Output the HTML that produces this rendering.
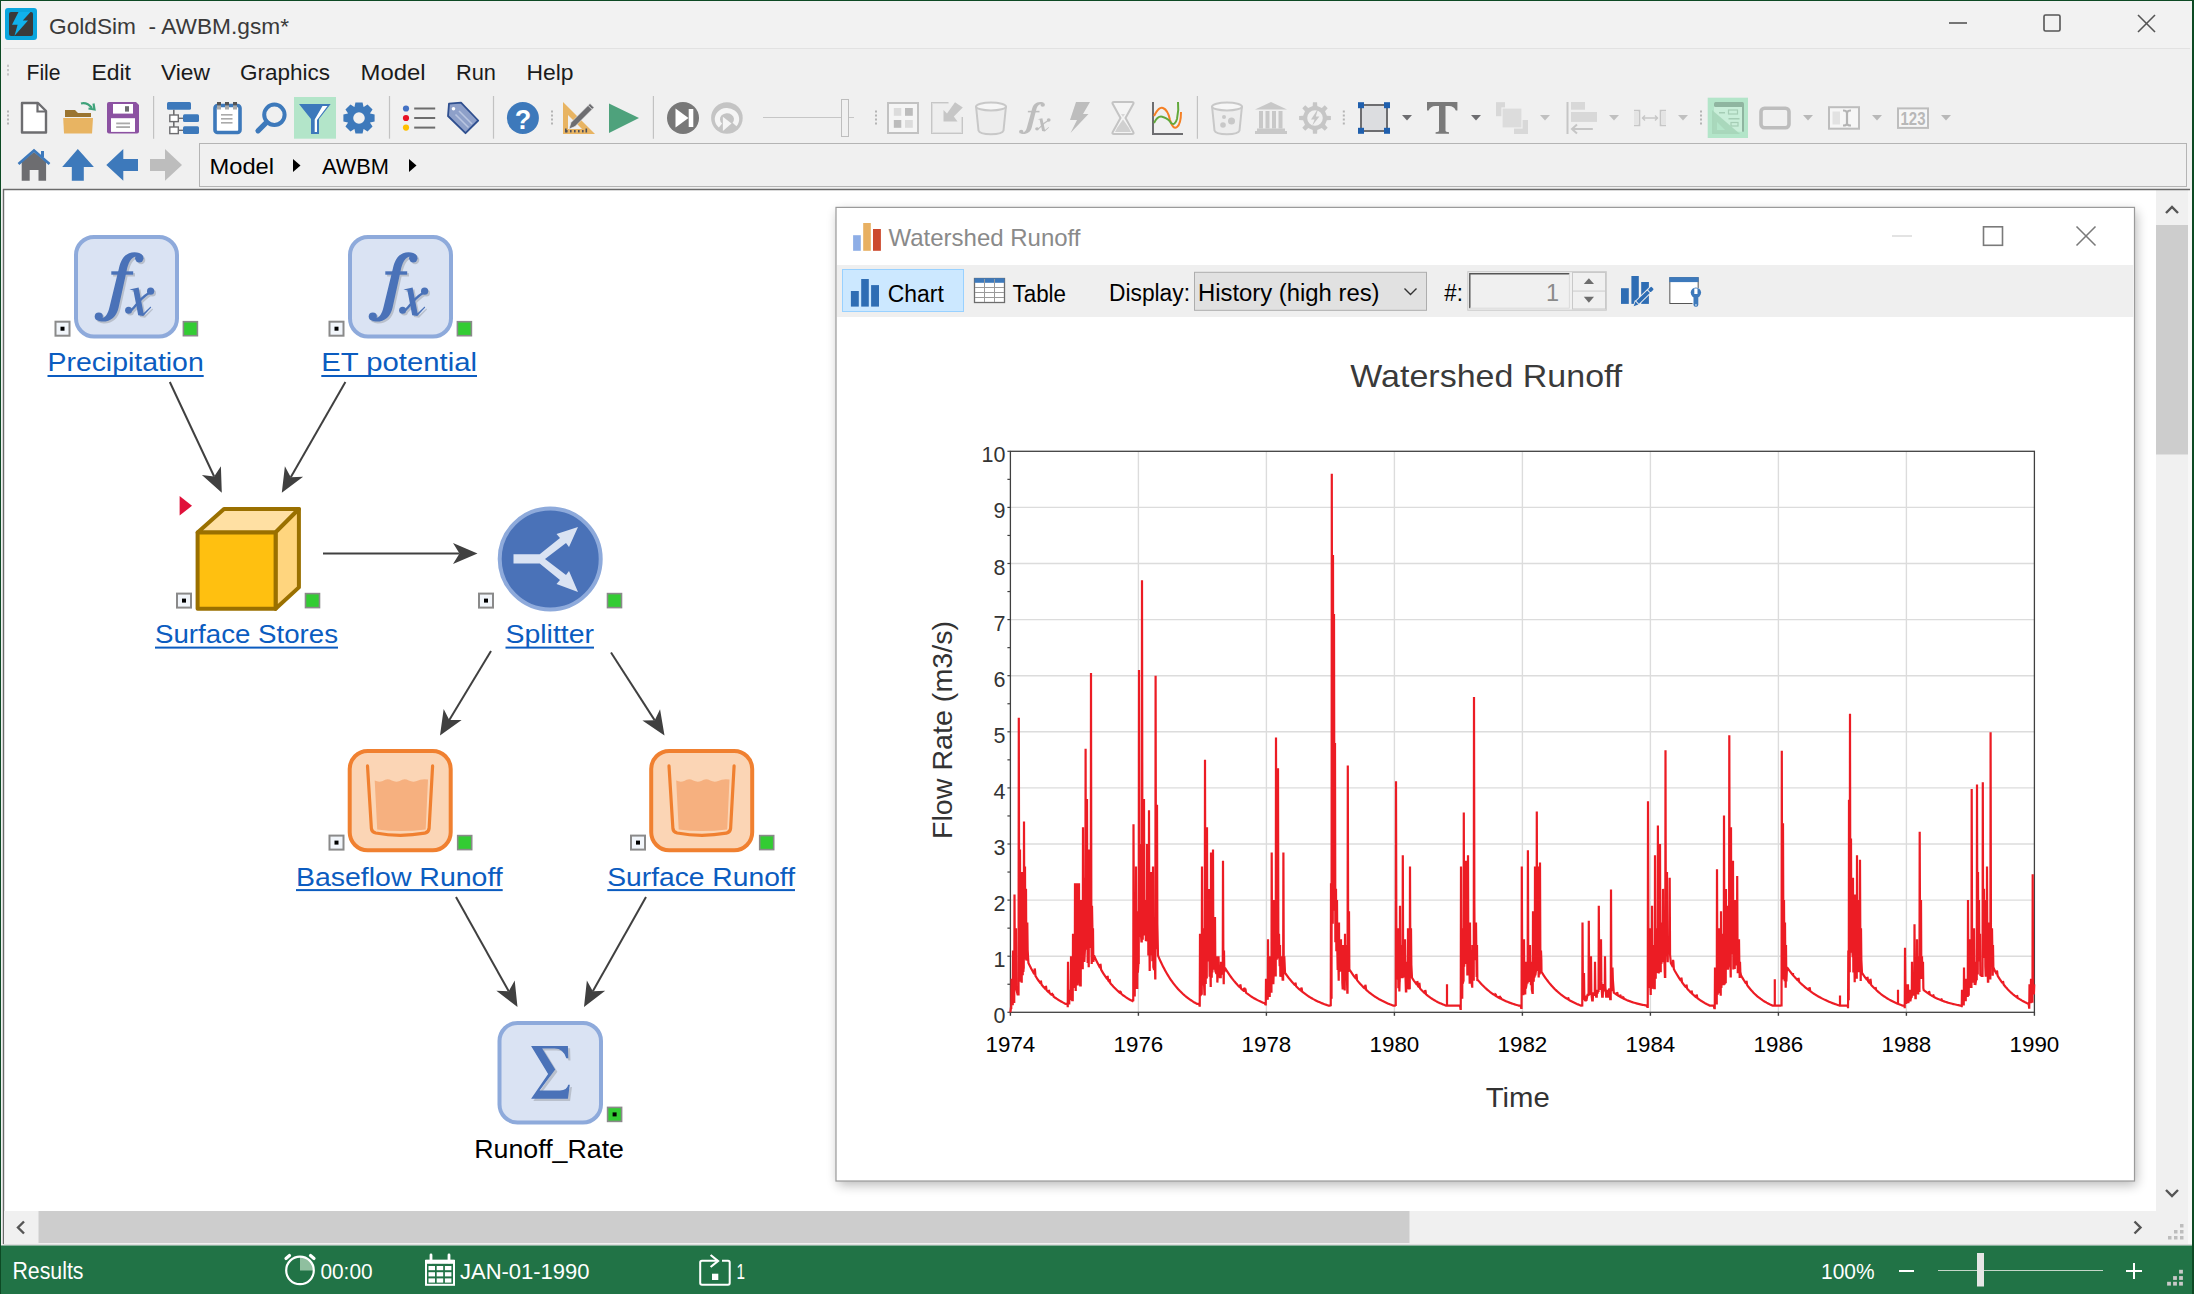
<!DOCTYPE html>
<html><head><meta charset="utf-8"><title>GoldSim - AWBM</title>
<style>html,body{margin:0;padding:0;overflow:hidden;background:#f0f0f0}svg{display:block}</style>
</head><body>
<svg width="2194" height="1294" viewBox="0 0 2194 1294" font-family="Liberation Sans, sans-serif">
<defs>
<filter id="shadow" x="-5%" y="-5%" width="110%" height="110%"><feGaussianBlur stdDeviation="6"/></filter>
</defs>
<rect x="0" y="0" width="2194" height="1294" rx="0" fill="#f0f0f0" />
<rect x="0" y="0" width="2194" height="48" rx="0" fill="#f2f2f2" />
<line x1="4" y1="48.5" x2="2190" y2="48.5" stroke="#e2e2e2" stroke-width="1" />
<rect x="0" y="0" width="2194" height="1" rx="0" fill="#0d4a24" />
<rect x="0" y="0" width="1" height="1294" rx="0" fill="#0d4a24" />
<rect x="2188" y="190" width="4" height="1055" rx="0" fill="#f7f7f7" />
<rect x="2192" y="0" width="2" height="1294" rx="0" fill="#0d4a24" />
<rect x="5" y="8" width="32" height="32" rx="3" fill="#0aa6de" />
<rect x="9" y="12" width="24" height="24" rx="2" fill="#3a3a3a" />
<path d="M18.5,12 L30.5,12 L22.8,20.4 L28,20.4 L14.5,35.8 L17.6,24.8 L12,24.8 Z" fill="#10b2ec" />
<text x="49" y="33.8" font-family="Liberation Sans" font-size="21.8" fill="#3a3a3a" text-anchor="start" font-weight="normal" xml:space="preserve" textLength="240" lengthAdjust="spacingAndGlyphs" >GoldSim  - AWBM.gsm*</text>
<line x1="1949" y1="23" x2="1967" y2="23" stroke="#555" stroke-width="1.6" />
<rect x="2044" y="15" width="16" height="16" rx="1.5" fill="none" stroke="#555" stroke-width="1.6" />
<line x1="2138" y1="15" x2="2155" y2="32" stroke="#555" stroke-width="1.6" />
<line x1="2155" y1="15" x2="2138" y2="32" stroke="#555" stroke-width="1.6" />
<rect x="7" y="64.7" width="2" height="2.2" rx="0" fill="#c4c4c4" />
<rect x="7" y="69.0" width="2" height="2.2" rx="0" fill="#c4c4c4" />
<rect x="7" y="73.3" width="2" height="2.2" rx="0" fill="#c4c4c4" />
<text x="26.5" y="80" font-family="Liberation Sans" font-size="22" fill="#1b1b1b" text-anchor="start" font-weight="normal" xml:space="preserve" textLength="34" lengthAdjust="spacingAndGlyphs" >File</text>
<text x="91.5" y="80" font-family="Liberation Sans" font-size="22" fill="#1b1b1b" text-anchor="start" font-weight="normal" xml:space="preserve" textLength="39.5" lengthAdjust="spacingAndGlyphs" >Edit</text>
<text x="161" y="80" font-family="Liberation Sans" font-size="22" fill="#1b1b1b" text-anchor="start" font-weight="normal" xml:space="preserve" textLength="49" lengthAdjust="spacingAndGlyphs" >View</text>
<text x="240" y="80" font-family="Liberation Sans" font-size="22" fill="#1b1b1b" text-anchor="start" font-weight="normal" xml:space="preserve" textLength="90" lengthAdjust="spacingAndGlyphs" >Graphics</text>
<text x="360.5" y="80" font-family="Liberation Sans" font-size="22" fill="#1b1b1b" text-anchor="start" font-weight="normal" xml:space="preserve" textLength="65" lengthAdjust="spacingAndGlyphs" >Model</text>
<text x="456" y="80" font-family="Liberation Sans" font-size="22" fill="#1b1b1b" text-anchor="start" font-weight="normal" xml:space="preserve" textLength="40" lengthAdjust="spacingAndGlyphs" >Run</text>
<text x="526.5" y="80" font-family="Liberation Sans" font-size="22" fill="#1b1b1b" text-anchor="start" font-weight="normal" xml:space="preserve" textLength="47" lengthAdjust="spacingAndGlyphs" >Help</text>
<rect x="7" y="110.5" width="2" height="2" rx="0" fill="#b4b4b4" />
<rect x="7" y="114.5" width="2" height="2" rx="0" fill="#b4b4b4" />
<rect x="7" y="118.5" width="2" height="2" rx="0" fill="#b4b4b4" />
<rect x="7" y="122.5" width="2" height="2" rx="0" fill="#b4b4b4" />
<path d="M22,103 L38,103 L46,111 L46,132.5 L22,132.5 Z" fill="#fff" stroke="#6d6d70" stroke-width="2.4" stroke-linejoin="round"/>
<path d="M37.5,103 L37.5,111.5 L46,111.5" fill="none" stroke="#6d6d70" stroke-width="2.2" />
<path d="M65,110 L75,110 L78,113 L91,113 L91,117 L65,117 Z" fill="#9a7430" />
<path d="M63.2,118 L93,118 L92,133.5 L64,133.5 Z" fill="#e8b462" />
<path d="M81,103.5 Q87,102 92,108" fill="none" stroke="#3ea27a" stroke-width="2.2" />
<path d="M88.5,108.5 L94.5,109.5 L93.5,103.5" fill="none" stroke="#3ea27a" stroke-width="2.2" />
<path d="M107,104 Q107,102 109,102 L136,102 L139,105 L139,131.5 Q139,133.6 137,133.6 L109,133.6 Q107,133.6 107,131.5 Z" fill="#8c52a2" />
<rect x="113" y="104" width="20" height="9.6" rx="0" fill="#fff" />
<rect x="125" y="106.2" width="4" height="5.4" rx="0" fill="#6d6d70" />
<rect x="111" y="118.2" width="24" height="13.7" rx="0" fill="#fff" />
<rect x="116.2" y="122.5" width="13.8" height="1.8" rx="0" fill="#aaa" />
<rect x="116.2" y="126.2" width="13.8" height="1.8" rx="0" fill="#aaa" />
<line x1="153.6" y1="96" x2="153.6" y2="138.7" stroke="#c2c2c2" stroke-width="1.2" />
<rect x="167" y="102" width="24" height="7.7" rx="1.5" fill="#3d79bb" />
<line x1="173.8" y1="109.7" x2="173.8" y2="130" stroke="#6d6d70" stroke-width="1.6" />
<rect x="169.8" y="115" width="8.5" height="6.6" rx="0" fill="#fff" stroke="#6d6d70" stroke-width="1.4" />
<rect x="169.8" y="127" width="8.5" height="6.6" rx="0" fill="#fff" stroke="#6d6d70" stroke-width="1.4" />
<line x1="178.3" y1="118.3" x2="183" y2="118.3" stroke="#6d6d70" stroke-width="1.4" />
<line x1="178.3" y1="130.3" x2="183" y2="130.3" stroke="#6d6d70" stroke-width="1.4" />
<rect x="183" y="114.2" width="16" height="7.7" rx="1.5" fill="#3d79bb" />
<rect x="183" y="126.2" width="16" height="7.7" rx="1.5" fill="#3d79bb" />
<rect x="215" y="105.5" width="25" height="27" rx="2.5" fill="#fff" stroke="#3d79bb" stroke-width="3.6" />
<rect x="217" y="102" width="4" height="3.5" rx="0" fill="#555" />
<rect x="217" y="105.5" width="4" height="4" rx="0" fill="#aaa" />
<rect x="225" y="102" width="4" height="3.5" rx="0" fill="#555" />
<rect x="225" y="105.5" width="4" height="4" rx="0" fill="#aaa" />
<rect x="233" y="102" width="4" height="3.5" rx="0" fill="#555" />
<rect x="233" y="105.5" width="4" height="4" rx="0" fill="#aaa" />
<rect x="221" y="114.0" width="11.5" height="1.6" rx="0" fill="#aaa" />
<rect x="221" y="118.0" width="11.5" height="1.6" rx="0" fill="#aaa" />
<rect x="221" y="122.0" width="11.5" height="1.6" rx="0" fill="#aaa" />
<circle cx="274.4" cy="114.8" r="10.2" fill="none" stroke="#3d79bb" stroke-width="4" />
<line x1="258" y1="130.8" x2="266.5" y2="122.3" stroke="#3d79bb" stroke-width="5.2" stroke-linecap="round"/>
<rect x="294" y="97" width="42" height="41.7" rx="0" fill="#b3e5c9" />
<path d="M299,104 L330.7,104 L319,119 L319,134 L311,134 L311,119 Z" fill="#3d79bb" />
<path d="M322.5,106 L327.5,106 L317,120 L317,132 L314.7,132 L314.7,119.5 Z" fill="#fff" />
<path d="M354.51,106.87 L355.43,102.40 L362.57,102.40 L363.49,106.87 L363.70,106.96 L367.50,104.45 L372.55,109.50 L370.04,113.30 L370.13,113.51 L374.60,114.43 L374.60,121.57 L370.13,122.49 L370.04,122.70 L372.55,126.50 L367.50,131.55 L363.70,129.04 L363.49,129.13 L362.57,133.60 L355.43,133.60 L354.51,129.13 L354.30,129.04 L350.50,131.55 L345.45,126.50 L347.96,122.70 L347.87,122.49 L343.40,121.57 L343.40,114.43 L347.87,113.51 L347.96,113.30 L345.45,109.50 L350.50,104.45 L354.30,106.96 Z M364.8,118 A5.8,5.8 0 1 0 353.2,118 A5.8,5.8 0 1 0 364.8,118 Z" fill="#3d79bb" fill-rule="evenodd"/>
<line x1="389.5" y1="96" x2="389.5" y2="138.7" stroke="#c2c2c2" stroke-width="1.2" />
<circle cx="406" cy="108.5" r="3.1" fill="#4472c4" />
<circle cx="406" cy="118" r="3.1" fill="#e81123" />
<circle cx="406" cy="127.6" r="3.1" fill="#ffc000" />
<rect x="414.2" y="107.5" width="21" height="2" rx="0" fill="#6d6d6d" />
<rect x="414.2" y="117" width="21" height="2" rx="0" fill="#6d6d6d" />
<rect x="414.2" y="126.6" width="21" height="2" rx="0" fill="#6d6d6d" />
<path d="M449,103.6 L461,102.6 L478.2,120.5 L465.5,133.2 L448,116 Z" fill="#8ea0c9" stroke="#2f4f8f" stroke-width="1.8" stroke-linejoin="round"/>
<circle cx="453.5" cy="108.7" r="1.8" fill="#fff" />
<line x1="459" y1="111" x2="472" y2="124" stroke="#b9c5e0" stroke-width="1.6" />
<line x1="455.5" y1="114.5" x2="468.5" y2="127.5" stroke="#b9c5e0" stroke-width="1.6" />
<line x1="493.5" y1="96" x2="493.5" y2="138.7" stroke="#c2c2c2" stroke-width="1.2" />
<circle cx="522.9" cy="118" r="16" fill="#3d79bb" />
<text x="522.9" y="128.5" font-family="Liberation Sans" font-size="27" fill="#fff" text-anchor="middle" font-weight="bold" xml:space="preserve" >?</text>
<rect x="551" y="110.5" width="2" height="2" rx="0" fill="#b4b4b4" />
<rect x="551" y="114.5" width="2" height="2" rx="0" fill="#b4b4b4" />
<rect x="551" y="118.5" width="2" height="2" rx="0" fill="#b4b4b4" />
<rect x="551" y="122.5" width="2" height="2" rx="0" fill="#b4b4b4" />
<path d="M563,102 L563,134 L595,134 Z" fill="#e8b462" />
<path d="M568,115 L568,129 L582,129 Z" fill="#f0f0f0" />
<rect x="566" y="130" width="1.6" height="2.4" rx="0" fill="#50505a" />
<rect x="570" y="130" width="1.6" height="2.4" rx="0" fill="#50505a" />
<rect x="574" y="130" width="1.6" height="2.4" rx="0" fill="#50505a" />
<rect x="578" y="130" width="1.6" height="2.4" rx="0" fill="#50505a" />
<rect x="582" y="130" width="1.6" height="2.4" rx="0" fill="#50505a" />
<rect x="565" y="128.5" width="1.6" height="4" rx="0" fill="#50505a" />
<rect x="585.5" y="128.5" width="1.6" height="4" rx="0" fill="#50505a" />
<path d="M569,129 L571,122.5 L590,103.5 L594,107.5 L575,126.5 Z" fill="#6d6d70" stroke="#f0f0f0" stroke-width="0.6" />
<path d="M588,105.3 L592.2,109.5" fill="none" stroke="#f0f0f0" stroke-width="0.9" />
<path d="M609,103.4 L639,118 L609,133 Z" fill="#4ea27c" />
<line x1="653.4" y1="96" x2="653.4" y2="138.7" stroke="#c2c2c2" stroke-width="1.2" />
<circle cx="683" cy="118" r="16" fill="#787878" />
<path d="M675.5,108.5 L688.5,118 L675.5,127.5 Z" fill="#fff" />
<rect x="688.7" y="109" width="4.6" height="18" rx="0" fill="#fff" />
<circle cx="726.9" cy="118" r="15.8" fill="#c4c4c4" />
<path d="M720.5,125.5 A9.6,8.6 0 1 1 734.5,124.5" fill="none" stroke="#f5f5f5" stroke-width="5.2" />
<path d="M722.9,116.8 L722.9,131 L731.5,123.6 Z" fill="#f5f5f5" />
<line x1="763" y1="117.5" x2="854" y2="117.5" stroke="#c6c6c6" stroke-width="1.2" />
<rect x="841.5" y="99.5" width="7" height="37" rx="0" fill="#f0f0f0" stroke="#bdbdbd" stroke-width="1" />
<rect x="875" y="110.5" width="2" height="2" rx="0" fill="#b4b4b4" />
<rect x="875" y="114.5" width="2" height="2" rx="0" fill="#b4b4b4" />
<rect x="875" y="118.5" width="2" height="2" rx="0" fill="#b4b4b4" />
<rect x="875" y="122.5" width="2" height="2" rx="0" fill="#b4b4b4" />
<rect x="888" y="103" width="30" height="30" rx="0" fill="#f5f5f5" stroke="#c2c2c2" stroke-width="2" />
<rect x="893.8" y="108" width="7.5" height="7.8" rx="0" fill="#dcdcdc" />
<rect x="905" y="108" width="7.8" height="7.8" rx="0" fill="#bcbcbc" />
<rect x="893.8" y="120" width="7.5" height="7.8" rx="0" fill="#bcbcbc" />
<rect x="905" y="120" width="7.8" height="7.8" rx="0" fill="#dcdcdc" />
<path d="M948.5,103 L932,103 L932,133 L962,133 L962,117" fill="none" stroke="#c6c6c6" stroke-width="2" />
<path d="M932,133 L962,133 L962,117 L948.5,103 L932,103 Z" fill="#ececec" opacity="0.6"/>
<path d="M943.5,121.5 L943.5,110 L947,113.5 L955,102.2 L962.8,107.5 L953.8,116.5 L957.5,121.5 Z" fill="#c6c6c6" />
<path d="M976,106 L978.5,130.5 C980,135.5 1002,135.5 1003.5,130.5 L1006,106" fill="#ededed" stroke="#c8c8c8" stroke-width="2" />
<ellipse cx="991" cy="106.5" rx="15" ry="4" fill="#f6f6f6" stroke="#c8c8c8" stroke-width="2"/>
<g transform="translate(1008.1,94.07) scale(0.53,0.461)">
<g transform="translate(0,0)" fill="#bdbdbd"><path d="M45,33 C47,23.5 52,17.2 60.5,17.2 C64,17.2 67,18.2 68.6,20.4 L62,21.6 C57,22.4 54.2,28 52.6,36 L44.6,72.5 C42.5,82 36.5,87 27.5,86.6 L24,86 L27.5,83.2 C31.5,82.6 34,79 35.6,71.8 Z"/><circle cx="65.3" cy="23.3" r="4.2"/><circle cx="24.8" cy="81.6" r="4.1"/><rect x="37.3" y="36.3" width="21.9" height="3.4"/><path d="M55.5,54.4 L64.6,52.4 L69.6,78.2 L76.6,71.6 L77.2,72.6 L69.3,81 L64.2,80.2 L59.4,55.4 Z"/><path d="M75,58 C70,61 65,66 60,72.5 C58.5,74.5 57,75.5 55,75.8" fill="none" stroke="#bdbdbd" stroke-width="2.4"/><circle cx="76.6" cy="56.2" r="3.6"/><circle cx="54.6" cy="75.3" r="3.5"/></g>
</g>
<path d="M1076,102 L1090,102 L1083,114 L1088.5,114 L1070.5,133 L1077,120 L1070,120 Z" fill="#bdbdbd" />
<path d="M1112.5,103.5 Q1112,102 1114,102 L1132,102 Q1134,102 1133.5,103.5 L1125.5,118 L1133.5,132.5 Q1134,134 1132,134 L1114,134 Q1112,134 1112.5,132.5 L1120.5,118 Z" fill="#f4f4f4" stroke="#c4c4c4" stroke-width="2" />
<path d="M1117,128 L1123,119.5 L1129,128 L1131,132 L1115,132 Z" fill="#d0d0d0" />
<path d="M1121,114 L1125,114 L1123,117 Z" fill="#d8d8d8" />
<path d="M1153,102 L1153,134 L1183,134" fill="none" stroke="#6d6d70" stroke-width="2" />
<path d="M1154,116 Q1159,106 1163,108 Q1168,110 1170,120 Q1173,130 1177,127 Q1181,124 1181,112" fill="none" stroke="#f58025" stroke-width="2" />
<path d="M1154,123 Q1158,115 1163,117 Q1169,119 1171,123 Q1175,126 1177,119 Q1179,110 1178,102" fill="none" stroke="#62a83b" stroke-width="2" />
<line x1="1197.4" y1="96" x2="1197.4" y2="138.7" stroke="#c2c2c2" stroke-width="1.2" />
<path d="M1212,106 L1214.5,130.5 C1216,135.5 1238,135.5 1239.5,130.5 L1242,106" fill="#ededed" stroke="#c8c8c8" stroke-width="2" />
<ellipse cx="1227" cy="106.5" rx="15" ry="4" fill="#f6f6f6" stroke="#c8c8c8" stroke-width="2"/>
<circle cx="1224" cy="117" r="2" fill="#c8c8c8" />
<circle cx="1231.5" cy="121" r="3.5" fill="#c8c8c8" />
<circle cx="1223" cy="125" r="2.8" fill="#c8c8c8" />
<path d="M1255,109.5 L1271,102 L1287,109.5 Z" fill="#c8c8c8" />
<rect x="1255" y="131" width="32" height="3" rx="0" fill="#c8c8c8" />
<rect x="1257" y="128.5" width="28" height="2.5" rx="0" fill="#c8c8c8" />
<rect x="1259" y="111" width="4" height="17.5" rx="0" fill="#c8c8c8" />
<rect x="1265.5" y="111" width="4" height="17.5" rx="0" fill="#c8c8c8" />
<rect x="1272" y="111" width="4" height="17.5" rx="0" fill="#c8c8c8" />
<rect x="1278.5" y="111" width="4" height="17.5" rx="0" fill="#c8c8c8" />
<path d="M1312.71,106.12 L1312.91,102.14 L1317.09,102.14 L1317.29,106.12 L1321.79,107.98 L1324.74,105.30 L1327.70,108.26 L1325.02,111.21 L1326.88,115.71 L1330.86,115.91 L1330.86,120.09 L1326.88,120.29 L1325.02,124.79 L1327.70,127.74 L1324.74,130.70 L1321.79,128.02 L1317.29,129.88 L1317.09,133.86 L1312.91,133.86 L1312.71,129.88 L1308.21,128.02 L1305.26,130.70 L1302.30,127.74 L1304.98,124.79 L1303.12,120.29 L1299.14,120.09 L1299.14,115.91 L1303.12,115.71 L1304.98,111.21 L1302.30,108.26 L1305.26,105.30 L1308.21,107.98 Z M1322.8,118 A7.8,7.8 0 1 0 1307.2,118 A7.8,7.8 0 1 0 1322.8,118 Z" fill="#c6c6c6" fill-rule="evenodd"/>
<path d="M1317.2,110 L1311,119.4 L1314.6,119.4 L1312.3,125.5 L1319.4,116.6 L1315.8,116.6 L1317.8,110 Z" fill="#c6c6c6" />
<rect x="1342.8" y="110.5" width="2" height="2" rx="0" fill="#b4b4b4" />
<rect x="1342.8" y="114.5" width="2" height="2" rx="0" fill="#b4b4b4" />
<rect x="1342.8" y="118.5" width="2" height="2" rx="0" fill="#b4b4b4" />
<rect x="1342.8" y="122.5" width="2" height="2" rx="0" fill="#b4b4b4" />
<rect x="1361" y="105" width="26" height="26" rx="0" fill="#dcdde0" stroke="#6d6d70" stroke-width="2" />
<rect x="1358" y="102.2" width="6" height="6" rx="0" fill="#1f5fad" />
<rect x="1384" y="102.2" width="6" height="6" rx="0" fill="#1f5fad" />
<rect x="1358" y="127.8" width="6" height="6" rx="0" fill="#1f5fad" />
<rect x="1384" y="127.8" width="6" height="6" rx="0" fill="#1f5fad" />
<path d="M1402,115.0 L1412,115.0 L1407,120.6 Z" fill="#6d6d70" />
<path d="M1427,102 L1457.4,102 L1457.4,110.5 L1455.8,110.5 Q1454,106 1449,106 L1445.5,106 L1445.5,130.5 Q1445.5,132 1449,132.2 L1449,133.8 L1435.6,133.8 L1435.6,132.2 Q1439,132 1439,130.5 L1439,106 L1435.5,106 Q1430.5,106 1428.6,110.5 L1427,110.5 Z" fill="#7a7a7a" />
<path d="M1471,115.0 L1481,115.0 L1476,120.6 Z" fill="#6d6d70" />
<rect x="1496" y="102.2" width="9" height="14" rx="0" fill="#d8d8d8" />
<rect x="1514" y="120" width="14" height="14" rx="0" fill="#d8d8d8" />
<rect x="1502" y="108" width="20" height="20" rx="0" fill="#dcdcdc" stroke="#f0f0f0" stroke-width="1.2" />
<path d="M1540,115.0 L1550,115.0 L1545,120.6 Z" fill="#c0c0c0" />
<rect x="1566.5" y="102" width="2" height="32" rx="0" fill="#c6c6c6" />
<rect x="1571" y="102" width="14" height="7.7" rx="0" fill="#d8d8d8" />
<rect x="1571" y="112" width="26" height="9.9" rx="0" fill="#d8d8d8" />
<path d="M1592.8,129 L1572,129 M1577,124.5 L1572,129 L1577,133.5" fill="none" stroke="#c6c6c6" stroke-width="2" />
<path d="M1609,115.0 L1619,115.0 L1614,120.6 Z" fill="#c0c0c0" />
<path d="M1634,110.5 L1639.5,110.5 L1639.5,125.5 L1634,125.5" fill="none" stroke="#c6c6c6" stroke-width="1.6" />
<path d="M1666,110.5 L1660.5,110.5 L1660.5,125.5 L1666,125.5" fill="none" stroke="#c6c6c6" stroke-width="1.6" />
<rect x="1634" y="112" width="5" height="12" rx="0" fill="#e4e4e4" />
<rect x="1661" y="112" width="5" height="12" rx="0" fill="#e4e4e4" />
<path d="M1642,118 L1658,118 M1645,115.5 L1642.5,118 L1645,120.5 M1655,115.5 L1657.5,118 L1655,120.5" fill="none" stroke="#c6c6c6" stroke-width="1.4" />
<path d="M1678,115.0 L1688,115.0 L1683,120.6 Z" fill="#c0c0c0" />
<rect x="1700" y="110.5" width="2" height="2" rx="0" fill="#b4b4b4" />
<rect x="1700" y="114.5" width="2" height="2" rx="0" fill="#b4b4b4" />
<rect x="1700" y="118.5" width="2" height="2" rx="0" fill="#b4b4b4" />
<rect x="1700" y="122.5" width="2" height="2" rx="0" fill="#b4b4b4" />
<rect x="1707.7" y="97.7" width="40.3" height="40.3" rx="0" fill="#b3e5c9" />
<rect x="1714" y="102" width="30" height="29.7" rx="1.5" fill="#c9eed9" />
<rect x="1714" y="102" width="30" height="5" rx="1.5" fill="#8fb5a0" />
<rect x="1742" y="106" width="2" height="25.7" rx="0" fill="#8fb5a0" />
<rect x="1728.5" y="110" width="9" height="4" rx="0" fill="none" stroke="#a5cdb5" stroke-width="1.2" />
<rect x="1719" y="112" width="6" height="1.5" rx="0" fill="#a5cdb5" />
<rect x="1728.5" y="118" width="11" height="1.5" rx="0" fill="#a5cdb5" />
<rect x="1731" y="122.5" width="7" height="3.5" rx="0" fill="none" stroke="#a5cdb5" stroke-width="1.2" />
<path d="M1712,110 L1712,134 L1740,134 Z" fill="#a8d6bb" opacity="0.95"/>
<path d="M1717,122 L1717,130 L1725,130 Z" fill="#b3e5c9" />
<rect x="1761" y="108.2" width="28" height="19.5" rx="3.5" fill="none" stroke="#bdbdbd" stroke-width="3.6" />
<path d="M1803,115.0 L1813,115.0 L1808,120.6 Z" fill="#b8b8b8" />
<rect x="1829" y="107.2" width="30" height="21.5" rx="0" fill="#f6f6f6" stroke="#bdbdbd" stroke-width="2" />
<rect x="1832.5" y="111.5" width="7.5" height="13" rx="0" fill="#e2e2e2" />
<path d="M1843,110.5 Q1847,110.5 1847,113 Q1847,110.5 1851,110.5 M1847,113 L1847,123.5 M1843,125.5 Q1847,125.5 1847,123.5 Q1847,125.5 1851,125.5" fill="none" stroke="#b4b4b4" stroke-width="2.2" />
<path d="M1872,115.0 L1882,115.0 L1877,120.6 Z" fill="#b8b8b8" />
<rect x="1898" y="108.4" width="30" height="19.5" rx="0" fill="#f6f6f6" stroke="#bdbdbd" stroke-width="2" />
<text x="1913" y="125" font-family="Liberation Sans" font-size="18" fill="#b8b8b8" text-anchor="middle" font-weight="bold" xml:space="preserve" textLength="25" lengthAdjust="spacingAndGlyphs" >123</text>
<path d="M1941,115.0 L1951,115.0 L1946,120.6 Z" fill="#b8b8b8" />
<rect x="199.5" y="143.5" width="1987" height="43" rx="0" fill="#f0f0f0" stroke="#b4b4b4" stroke-width="1" />
<text x="209.5" y="174" font-family="Liberation Sans" font-size="22.5" fill="#000" text-anchor="start" font-weight="normal" xml:space="preserve" textLength="64.5" lengthAdjust="spacingAndGlyphs" >Model</text>
<path d="M293,159 L300.5,165.5 L293,172 Z" fill="#000" />
<text x="322" y="174" font-family="Liberation Sans" font-size="22.5" fill="#000" text-anchor="start" font-weight="normal" xml:space="preserve" textLength="67" lengthAdjust="spacingAndGlyphs" >AWBM</text>
<path d="M409,159 L416.5,165.5 L409,172 Z" fill="#000" />
<path d="M21.7,162 L34,152 L46.1,162 L46.1,180.7 L38.5,180.7 L38.5,170 L29.7,170 L29.7,180.7 L21.7,180.7 Z" fill="#6d6d70" />
<path d="M18.5,164 L34,150.5 L49.5,164" fill="none" stroke="#3d79bb" stroke-width="2.6" stroke-linejoin="miter"/>
<rect x="41" y="151" width="3" height="6" rx="0" fill="#3d79bb" />
<path d="M62.2,167 L77.8,149 L93.9,167 L83.8,167 L83.8,180.7 L71.8,180.7 L71.8,167 Z" fill="#3d79bb" />
<path d="M106.3,165 L123.3,149 L123.3,159 L138,159 L138,171 L123.3,171 L123.3,180.7 Z" fill="#3d79bb" />
<path d="M182,165 L165,149 L165,159 L150,159 L150,171 L165,171 L165,180.7 Z" fill="#bdbdbd" />
<rect x="3" y="189" width="2153" height="1022" rx="0" fill="#ffffff" />
<line x1="3" y1="189.5" x2="2190" y2="189.5" stroke="#6b6b6b" stroke-width="1.6" />
<line x1="3.5" y1="189" x2="3.5" y2="1244" stroke="#6b6b6b" stroke-width="1.4" />
<rect x="2156" y="191" width="32" height="1020" rx="0" fill="#f0f0f0" />
<rect x="2156" y="225" width="32" height="229.5" rx="0" fill="#cdcdcd" />
<path d="M2166,213 L2172,207 L2178,213" fill="none" stroke="#555" stroke-width="2.4" stroke-linejoin="miter"/>
<path d="M2166,1190 L2172,1196 L2178,1190" fill="none" stroke="#555" stroke-width="2.4" />
<rect x="4" y="1211" width="2184" height="33" rx="0" fill="#f0f0f0" />
<rect x="38.5" y="1211" width="1371" height="32" rx="0" fill="#cdcdcd" />
<path d="M24,1221.5 L18,1227.5 L24,1233.5" fill="none" stroke="#555" stroke-width="2.4" />
<path d="M2134.5,1221.5 L2140.5,1227.5 L2134.5,1233.5" fill="none" stroke="#555" stroke-width="2.4" />
<rect x="2180" y="1224" width="3.5" height="3.5" rx="0" fill="#bdbdbd" />
<rect x="2174" y="1230" width="3.5" height="3.5" rx="0" fill="#bdbdbd" />
<rect x="2180" y="1230" width="3.5" height="3.5" rx="0" fill="#bdbdbd" />
<rect x="2168" y="1236" width="3.5" height="3.5" rx="0" fill="#bdbdbd" />
<rect x="2174" y="1236" width="3.5" height="3.5" rx="0" fill="#bdbdbd" />
<rect x="2180" y="1236" width="3.5" height="3.5" rx="0" fill="#bdbdbd" />
<line x1="3" y1="1244.5" x2="2192" y2="1244.5" stroke="#dcdcdc" stroke-width="1" />
<rect x="1" y="1245.5" width="2191" height="48.5" rx="0" fill="#217346" />
<text x="12.5" y="1279" font-family="Liberation Sans" font-size="23.5" fill="#ffffff" text-anchor="start" font-weight="normal" xml:space="preserve" textLength="71" lengthAdjust="spacingAndGlyphs" >Results</text>
<text x="320.5" y="1279" font-family="Liberation Sans" font-size="21.5" fill="#ffffff" text-anchor="start" font-weight="normal" xml:space="preserve" textLength="52" lengthAdjust="spacingAndGlyphs" >00:00</text>
<text x="460" y="1279" font-family="Liberation Sans" font-size="21.5" fill="#ffffff" text-anchor="start" font-weight="normal" xml:space="preserve" textLength="129.5" lengthAdjust="spacingAndGlyphs" >JAN-01-1990</text>
<text x="736.5" y="1279" font-family="Liberation Sans" font-size="21.5" fill="#ffffff" text-anchor="start" font-weight="normal" xml:space="preserve" textLength="8.5" lengthAdjust="spacingAndGlyphs" >1</text>
<text x="1821" y="1279" font-family="Liberation Sans" font-size="21.5" fill="#ffffff" text-anchor="start" font-weight="normal" xml:space="preserve" textLength="53.5" lengthAdjust="spacingAndGlyphs" >100%</text>
<line x1="1899" y1="1271" x2="1914" y2="1271" stroke="#ffffff" stroke-width="2" />
<line x1="1938" y1="1270.5" x2="2103" y2="1270.5" stroke="#c4d6c9" stroke-width="1" />
<rect x="1977" y="1253" width="7" height="33.5" rx="0" fill="#e6e6e6" />
<line x1="2126" y1="1271" x2="2142" y2="1271" stroke="#ffffff" stroke-width="2" />
<line x1="2134" y1="1263" x2="2134" y2="1279" stroke="#ffffff" stroke-width="2" />
<rect x="2179.1" y="1269.8" width="3.8" height="3.8" rx="0" fill="#c9c9c9" />
<rect x="2173.1" y="1276.1" width="3.8" height="3.8" rx="0" fill="#c9c9c9" />
<rect x="2179.1" y="1276.1" width="3.8" height="3.8" rx="0" fill="#c9c9c9" />
<rect x="2167.1" y="1281.8" width="3.8" height="3.8" rx="0" fill="#c9c9c9" />
<rect x="2173.1" y="1281.8" width="3.8" height="3.8" rx="0" fill="#c9c9c9" />
<rect x="2179.1" y="1281.8" width="3.8" height="3.8" rx="0" fill="#c9c9c9" />
<path d="M300,1270.4 L300,1256.7 A13.7,13.7 0 0 1 313.7,1270.4 Z" fill="#8fbf9f" />
<circle cx="300" cy="1270.4" r="13.8" fill="none" stroke="#ffffff" stroke-width="2.2" />
<line x1="286" y1="1258.5" x2="289.5" y2="1255.5" stroke="#ffffff" stroke-width="3.2" stroke-linecap="round"/>
<line x1="314" y1="1258.5" x2="310.5" y2="1255.5" stroke="#ffffff" stroke-width="3.2" stroke-linecap="round"/>
<rect x="426" y="1260.8" width="28" height="24" rx="0" fill="none" stroke="#ffffff" stroke-width="2" />
<rect x="426" y="1259.8" width="28" height="4" rx="0" fill="#ffffff" />
<line x1="431" y1="1255" x2="431" y2="1262" stroke="#ffffff" stroke-width="2.8" stroke-linecap="round"/>
<line x1="449" y1="1255" x2="449" y2="1262" stroke="#ffffff" stroke-width="2.8" stroke-linecap="round"/>
<rect x="428.5" y="1266.0" width="6.5" height="4.2" rx="0" fill="#ffffff" />
<rect x="428.5" y="1272.2" width="6.5" height="4.2" rx="0" fill="#ffffff" />
<rect x="428.5" y="1278.4" width="6.5" height="4.2" rx="0" fill="#ffffff" />
<rect x="436.7" y="1266.0" width="6.5" height="4.2" rx="0" fill="#ffffff" />
<rect x="436.7" y="1272.2" width="6.5" height="4.2" rx="0" fill="#ffffff" />
<rect x="436.7" y="1278.4" width="6.5" height="4.2" rx="0" fill="#ffffff" />
<rect x="444.9" y="1266.0" width="6.5" height="4.2" rx="0" fill="#ffffff" />
<rect x="444.9" y="1272.2" width="6.5" height="4.2" rx="0" fill="#ffffff" />
<rect x="444.9" y="1278.4" width="6.5" height="4.2" rx="0" fill="#ffffff" />
<path d="M717.8,1260.8 L702,1260.8 Q700.2,1260.8 700.2,1262.6 L700.2,1283 Q700.2,1284.7 702,1284.7 L728,1284.7 Q729.7,1284.7 729.7,1283 L729.7,1262.6 Q729.7,1260.8 728,1260.8 L722,1260.8" fill="none" stroke="#ffffff" stroke-width="2" />
<path d="M710.6,1255 L718,1261 L710.6,1267" fill="none" stroke="#ffffff" stroke-width="2.2" />
<rect x="712" y="1273.7" width="6.3" height="6.3" rx="0" fill="#ffffff" />
<line x1="169.8" y1="382" x2="214.15265532266838" y2="476.50527326445496" stroke="#404040" stroke-width="2" />
<path d="M221.80,492.80 L201.89,475.08 L214.15,476.51 L220.90,466.16 Z" fill="#404040" />
<line x1="345.4" y1="382" x2="290.7608303598039" y2="477.1889936499015" stroke="#404040" stroke-width="2" />
<path d="M281.80,492.80 L284.89,466.32 L290.76,477.19 L303.10,476.78 Z" fill="#404040" />
<line x1="323" y1="553.6" x2="459.5" y2="553.6" stroke="#404040" stroke-width="2" />
<path d="M477.50,553.60 L453.00,564.10 L459.50,553.60 L453.00,543.10 Z" fill="#404040" />
<line x1="491" y1="651" x2="449.30112190697156" y2="720.0893176247237" stroke="#404040" stroke-width="2" />
<path d="M440.00,735.50 L443.67,709.10 L449.30,720.09 L461.65,719.95 Z" fill="#404040" />
<line x1="611" y1="652.5" x2="654.7479450066796" y2="720.3706436552226" stroke="#404040" stroke-width="2" />
<path d="M664.50,735.50 L642.40,720.60 L654.75,720.37 L660.05,709.22 Z" fill="#404040" />
<line x1="456" y1="897" x2="508.7160145662267" y2="991.2888065412185" stroke="#404040" stroke-width="2" />
<path d="M517.50,1007.00 L496.38,990.74 L508.72,991.29 L514.71,980.49 Z" fill="#404040" />
<line x1="646" y1="897" x2="592.8382351406491" y2="991.3192602343322" stroke="#404040" stroke-width="2" />
<path d="M584.00,1007.00 L586.88,980.50 L592.84,991.32 L605.18,990.81 Z" fill="#404040" />
<rect x="76" y="237" width="101" height="99.5" rx="18" fill="#dae3f3" stroke="#8eaadb" stroke-width="4" />
<g transform="translate(75.8,236.8)" fill="#b9c0cc"><path d="M45,33 C47,23.5 52,17.2 60.5,17.2 C64,17.2 67,18.2 68.6,20.4 L62,21.6 C57,22.4 54.2,28 52.6,36 L44.6,72.5 C42.5,82 36.5,87 27.5,86.6 L24,86 L27.5,83.2 C31.5,82.6 34,79 35.6,71.8 Z"/><circle cx="65.3" cy="23.3" r="4.2"/><circle cx="24.8" cy="81.6" r="4.1"/><rect x="37.3" y="36.3" width="21.9" height="3.4"/><path d="M55.5,54.4 L64.6,52.4 L69.6,78.2 L76.6,71.6 L77.2,72.6 L69.3,81 L64.2,80.2 L59.4,55.4 Z"/><path d="M75,58 C70,61 65,66 60,72.5 C58.5,74.5 57,75.5 55,75.8" fill="none" stroke="#b9c0cc" stroke-width="2.4"/><circle cx="76.6" cy="56.2" r="3.6"/><circle cx="54.6" cy="75.3" r="3.5"/></g>
<g transform="translate(74,235)" fill="#4a72b8"><path d="M45,33 C47,23.5 52,17.2 60.5,17.2 C64,17.2 67,18.2 68.6,20.4 L62,21.6 C57,22.4 54.2,28 52.6,36 L44.6,72.5 C42.5,82 36.5,87 27.5,86.6 L24,86 L27.5,83.2 C31.5,82.6 34,79 35.6,71.8 Z"/><circle cx="65.3" cy="23.3" r="4.2"/><circle cx="24.8" cy="81.6" r="4.1"/><rect x="37.3" y="36.3" width="21.9" height="3.4"/><path d="M55.5,54.4 L64.6,52.4 L69.6,78.2 L76.6,71.6 L77.2,72.6 L69.3,81 L64.2,80.2 L59.4,55.4 Z"/><path d="M75,58 C70,61 65,66 60,72.5 C58.5,74.5 57,75.5 55,75.8" fill="none" stroke="#4a72b8" stroke-width="2.4"/><circle cx="76.6" cy="56.2" r="3.6"/><circle cx="54.6" cy="75.3" r="3.5"/></g>
<rect x="55.5" y="321.7" width="14" height="14" rx="0" fill="#f2f6fb" stroke="#8a8a8a" stroke-width="2" />
<rect x="60.5" y="326.7" width="4" height="4" rx="0" fill="#000" />
<rect x="183.4" y="321.7" width="14" height="14" rx="0" fill="#33cc33" stroke="#8a8a8a" stroke-width="1.6" />
<text x="47.5" y="371.4" font-family="Liberation Sans" font-size="25" fill="#0b5cc0" text-anchor="start" font-weight="normal" xml:space="preserve" textLength="156.2" lengthAdjust="spacingAndGlyphs" >Precipitation</text>
<rect x="47.5" y="375.0" width="156.2" height="2" rx="0" fill="#0b5cc0" />
<rect x="350" y="237" width="101" height="99.5" rx="18" fill="#dae3f3" stroke="#8eaadb" stroke-width="4" />
<g transform="translate(349.8,236.8)" fill="#b9c0cc"><path d="M45,33 C47,23.5 52,17.2 60.5,17.2 C64,17.2 67,18.2 68.6,20.4 L62,21.6 C57,22.4 54.2,28 52.6,36 L44.6,72.5 C42.5,82 36.5,87 27.5,86.6 L24,86 L27.5,83.2 C31.5,82.6 34,79 35.6,71.8 Z"/><circle cx="65.3" cy="23.3" r="4.2"/><circle cx="24.8" cy="81.6" r="4.1"/><rect x="37.3" y="36.3" width="21.9" height="3.4"/><path d="M55.5,54.4 L64.6,52.4 L69.6,78.2 L76.6,71.6 L77.2,72.6 L69.3,81 L64.2,80.2 L59.4,55.4 Z"/><path d="M75,58 C70,61 65,66 60,72.5 C58.5,74.5 57,75.5 55,75.8" fill="none" stroke="#b9c0cc" stroke-width="2.4"/><circle cx="76.6" cy="56.2" r="3.6"/><circle cx="54.6" cy="75.3" r="3.5"/></g>
<g transform="translate(348,235)" fill="#4a72b8"><path d="M45,33 C47,23.5 52,17.2 60.5,17.2 C64,17.2 67,18.2 68.6,20.4 L62,21.6 C57,22.4 54.2,28 52.6,36 L44.6,72.5 C42.5,82 36.5,87 27.5,86.6 L24,86 L27.5,83.2 C31.5,82.6 34,79 35.6,71.8 Z"/><circle cx="65.3" cy="23.3" r="4.2"/><circle cx="24.8" cy="81.6" r="4.1"/><rect x="37.3" y="36.3" width="21.9" height="3.4"/><path d="M55.5,54.4 L64.6,52.4 L69.6,78.2 L76.6,71.6 L77.2,72.6 L69.3,81 L64.2,80.2 L59.4,55.4 Z"/><path d="M75,58 C70,61 65,66 60,72.5 C58.5,74.5 57,75.5 55,75.8" fill="none" stroke="#4a72b8" stroke-width="2.4"/><circle cx="76.6" cy="56.2" r="3.6"/><circle cx="54.6" cy="75.3" r="3.5"/></g>
<rect x="329.5" y="321.7" width="14" height="14" rx="0" fill="#f2f6fb" stroke="#8a8a8a" stroke-width="2" />
<rect x="334.5" y="326.7" width="4" height="4" rx="0" fill="#000" />
<rect x="457.4" y="321.7" width="14" height="14" rx="0" fill="#33cc33" stroke="#8a8a8a" stroke-width="1.6" />
<text x="321.3" y="371.4" font-family="Liberation Sans" font-size="25" fill="#0b5cc0" text-anchor="start" font-weight="normal" xml:space="preserve" textLength="155.7" lengthAdjust="spacingAndGlyphs" >ET potential</text>
<rect x="321.3" y="375.0" width="155.7" height="2" rx="0" fill="#0b5cc0" />
<path d="M179.6,496 L192,505.8 L179.6,515.6 Z" fill="#e0103a" />
<path d="M197.6,532.4 L224,509 L298.9,509 L275.6,532.4 Z" fill="#ffe0a3" stroke="#9a7000" stroke-width="4" stroke-linejoin="round"/>
<path d="M275.6,532.4 L298.9,509 L298.9,587.4 L275.6,608.8 Z" fill="#ffd57e" stroke="#9a7000" stroke-width="4" stroke-linejoin="round"/>
<path d="M197.6,532.4 L275.6,532.4 L275.6,608.8 L197.6,608.8 Z" fill="#ffc010" stroke="#9a7000" stroke-width="4" stroke-linejoin="round"/>
<rect x="177" y="593.6" width="14" height="14" rx="0" fill="#f2f6fb" stroke="#8a8a8a" stroke-width="2" />
<rect x="182" y="598.6" width="4" height="4" rx="0" fill="#000" />
<rect x="305.5" y="593.6" width="14" height="14" rx="0" fill="#33cc33" stroke="#8a8a8a" stroke-width="1.6" />
<text x="155" y="643" font-family="Liberation Sans" font-size="25" fill="#0b5cc0" text-anchor="start" font-weight="normal" xml:space="preserve" textLength="183" lengthAdjust="spacingAndGlyphs" >Surface Stores</text>
<rect x="155" y="646.6" width="183" height="2" rx="0" fill="#0b5cc0" />
<circle cx="550.2" cy="559" r="50.5" fill="#4a72b8" stroke="#8eaadb" stroke-width="4" />
<path d="M513.5,554.3 L539.7,554.3 L560,538 L556.5,534 L578,527 L569,547 L566,543 L545,559 L566,575 L569,571 L578,592 L556.5,584 L560,580 L539.7,563.5 L513.5,563.5 Z" fill="#dae3f3" />
<rect x="479" y="593.6" width="14" height="14" rx="0" fill="#f2f6fb" stroke="#8a8a8a" stroke-width="2" />
<rect x="484" y="598.6" width="4" height="4" rx="0" fill="#000" />
<rect x="607.5" y="593.6" width="14" height="14" rx="0" fill="#33cc33" stroke="#8a8a8a" stroke-width="1.6" />
<text x="505.5" y="643" font-family="Liberation Sans" font-size="25" fill="#0b5cc0" text-anchor="start" font-weight="normal" xml:space="preserve" textLength="88.5" lengthAdjust="spacingAndGlyphs" >Splitter</text>
<rect x="505.5" y="646.6" width="88.5" height="2" rx="0" fill="#0b5cc0" />
<rect x="349.7" y="751" width="101" height="99.3" rx="18" fill="#fbd5b5" stroke="#f08030" stroke-width="4" />
<path d="M374.7,780.5 Q378.7,782.5 382.7,781 Q387.2,778 391.7,780.5 Q395.7,782.5 399.7,781 Q404.2,778 408.7,780.5 Q412.7,782.5 416.7,781 Q421.2,778.5 428.0,779.5 L425.7,829.5 Q399.7,832.5 377.2,829.5 Z" fill="#f6b07f" />
<path d="M367.5,765.8 L371.4,828.5 Q371.7,832 375.7,833 Q399.7,837.5 424.7,833.2 Q428.7,832.2 429.1,828.5 L432.6,765.8" fill="none" stroke="#f08030" stroke-width="3.2" stroke-linecap="round" stroke-linejoin="round"/>
<rect x="329.5" y="835.6" width="14" height="14" rx="0" fill="#f2f6fb" stroke="#8a8a8a" stroke-width="2" />
<rect x="334.5" y="840.6" width="4" height="4" rx="0" fill="#000" />
<rect x="457.7" y="835.6" width="14" height="14" rx="0" fill="#33cc33" stroke="#8a8a8a" stroke-width="1.6" />
<text x="296" y="885.5" font-family="Liberation Sans" font-size="25" fill="#0b5cc0" text-anchor="start" font-weight="normal" xml:space="preserve" textLength="206.7" lengthAdjust="spacingAndGlyphs" >Baseflow Runoff</text>
<rect x="296" y="889.1" width="206.7" height="2" rx="0" fill="#0b5cc0" />
<rect x="651.2" y="751" width="101" height="99.3" rx="18" fill="#fbd5b5" stroke="#f08030" stroke-width="4" />
<path d="M676.2,780.5 Q680.2,782.5 684.2,781 Q688.7,778 693.2,780.5 Q697.2,782.5 701.2,781 Q705.7,778 710.2,780.5 Q714.2,782.5 718.2,781 Q722.7,778.5 729.5,779.5 L727.2,829.5 Q701.2,832.5 678.7,829.5 Z" fill="#f6b07f" />
<path d="M669.0,765.8 L672.9000000000001,828.5 Q673.2,832 677.2,833 Q701.2,837.5 726.2,833.2 Q730.2,832.2 730.6,828.5 L734.1,765.8" fill="none" stroke="#f08030" stroke-width="3.2" stroke-linecap="round" stroke-linejoin="round"/>
<rect x="631" y="835.6" width="14" height="14" rx="0" fill="#f2f6fb" stroke="#8a8a8a" stroke-width="2" />
<rect x="636" y="840.6" width="4" height="4" rx="0" fill="#000" />
<rect x="759.7" y="835.6" width="14" height="14" rx="0" fill="#33cc33" stroke="#8a8a8a" stroke-width="1.6" />
<text x="607.3" y="885.5" font-family="Liberation Sans" font-size="25" fill="#0b5cc0" text-anchor="start" font-weight="normal" xml:space="preserve" textLength="187.7" lengthAdjust="spacingAndGlyphs" >Surface Runoff</text>
<rect x="607.3" y="889.1" width="187.70000000000005" height="2" rx="0" fill="#0b5cc0" />
<rect x="499.5" y="1023" width="101.5" height="99.5" rx="18" fill="#dae3f3" stroke="#8eaadb" stroke-width="4" />
<path d="M531.1,1046 L567.9,1046 L568.3,1058.2 L566.3,1058.2 Q563.5,1048.4 554.5,1048.4 L542.2,1048.4 L555.2,1069.5 L539.6,1090.4 L560,1090.4 Q567,1090.4 568.2,1084.7 L569.8,1084.7 L567.9,1098.8 L531.1,1098.8 L548.1,1073.9 Z" fill="#b9c0cc" transform="translate(2.2,2.2)"/>
<path d="M531.1,1046 L567.9,1046 L568.3,1058.2 L566.3,1058.2 Q563.5,1048.4 554.5,1048.4 L542.2,1048.4 L555.2,1069.5 L539.6,1090.4 L560,1090.4 Q567,1090.4 568.2,1084.7 L569.8,1084.7 L567.9,1098.8 L531.1,1098.8 L548.1,1073.9 Z" fill="#4a72b8" />
<rect x="607.6" y="1107.4" width="14" height="14" rx="0" fill="#33cc33" stroke="#8a8a8a" stroke-width="1.6" />
<rect x="612.6" y="1112.4" width="4" height="4" rx="0" fill="#000" />
<text x="474.3" y="1157.8" font-family="Liberation Sans" font-size="25" fill="#000" text-anchor="start" font-weight="normal" xml:space="preserve" textLength="149.7" lengthAdjust="spacingAndGlyphs" >Runoff_Rate</text>
<rect x="838" y="211.4" width="1298.5" height="973.6" rx="0" fill="#000" opacity="0.28" filter="url(#shadow)"/>
<rect x="836" y="207.4" width="1298.5" height="973.6" rx="0" fill="#fff" stroke="#9a9a9a" stroke-width="1.2" />
<rect x="837" y="265" width="1296.5" height="52" rx="0" fill="#efefef" />
<rect x="853.1" y="235.2" width="7.7" height="15.6" rx="0" fill="#8eaee6" />
<rect x="863.2" y="223" width="7.6" height="27.8" rx="0" fill="#e8b062" />
<rect x="873" y="229" width="7.9" height="21.8" rx="0" fill="#cc4a2e" />
<text x="888.5" y="246" font-family="Liberation Sans" font-size="24" fill="#8a8a8a" text-anchor="start" font-weight="normal" xml:space="preserve" textLength="192" lengthAdjust="spacingAndGlyphs" >Watershed Runoff</text>
<line x1="1892" y1="236" x2="1912" y2="236" stroke="#dddddd" stroke-width="1.6" />
<rect x="1983.5" y="226.8" width="19" height="18.5" rx="0" fill="none" stroke="#7a7a7a" stroke-width="1.6" />
<line x1="2076.5" y1="226.5" x2="2095.5" y2="245.5" stroke="#7a7a7a" stroke-width="1.6" />
<line x1="2095.5" y1="226.5" x2="2076.5" y2="245.5" stroke="#7a7a7a" stroke-width="1.6" />
<rect x="842.5" y="269.5" width="121" height="42" rx="0" fill="#cce8ff" stroke="#99d1ff" stroke-width="1" />
<rect x="850.9" y="291" width="7.9" height="15.6" rx="0" fill="#2e6db4" />
<rect x="861.2" y="279" width="7.6" height="27.6" rx="0" fill="#2e6db4" />
<rect x="871.1" y="285.1" width="7.9" height="21.5" rx="0" fill="#2e6db4" />
<text x="887.8" y="301.7" font-family="Liberation Sans" font-size="23.5" fill="#000" text-anchor="start" font-weight="normal" xml:space="preserve" textLength="56" lengthAdjust="spacingAndGlyphs" >Chart</text>
<rect x="974.5" y="278.5" width="30" height="24" rx="0" fill="#fff" stroke="#6d6d6d" stroke-width="1.3" />
<rect x="974.5" y="278.2" width="30" height="4.6" rx="0" fill="#3d79bb" />
<line x1="975" y1="287.5" x2="1004" y2="287.5" stroke="#9a9a9a" stroke-width="1" />
<line x1="975" y1="292.5" x2="1004" y2="292.5" stroke="#9a9a9a" stroke-width="1" />
<line x1="975" y1="297.5" x2="1004" y2="297.5" stroke="#9a9a9a" stroke-width="1" />
<line x1="984.5" y1="279" x2="984.5" y2="302" stroke="#9a9a9a" stroke-width="1" />
<line x1="994.5" y1="279" x2="994.5" y2="302" stroke="#9a9a9a" stroke-width="1" />
<text x="1012.5" y="301.7" font-family="Liberation Sans" font-size="23.5" fill="#000" text-anchor="start" font-weight="normal" xml:space="preserve" textLength="53.5" lengthAdjust="spacingAndGlyphs" >Table</text>
<text x="1109" y="300.6" font-family="Liberation Sans" font-size="23.5" fill="#000" text-anchor="start" font-weight="normal" xml:space="preserve" textLength="81" lengthAdjust="spacingAndGlyphs" >Display:</text>
<rect x="1194.5" y="272.3" width="232" height="38" rx="0" fill="#e1e1e1" stroke="#adadad" stroke-width="1" />
<text x="1198" y="300.6" font-family="Liberation Sans" font-size="23.5" fill="#000" text-anchor="start" font-weight="normal" xml:space="preserve" textLength="181.5" lengthAdjust="spacingAndGlyphs" >History (high res)</text>
<path d="M1404.5,288.5 L1410.5,294.5 L1416.5,288.5" fill="none" stroke="#333" stroke-width="1.4" />
<text x="1444.3" y="300.8" font-family="Liberation Sans" font-size="23.5" fill="#000" text-anchor="start" font-weight="normal" xml:space="preserve" textLength="18.5" lengthAdjust="spacingAndGlyphs" >#:</text>
<rect x="1467.8" y="271.7" width="138.5" height="38.5" rx="0" fill="#f0f0f0" stroke="#c9c9c9" stroke-width="1" />
<path d="M1469.8,308.2 L1469.8,273.7 L1569.4,273.7" fill="none" stroke="#555" stroke-width="1.4" />
<path d="M1569.4,273.7 L1569.4,308.2 L1469.8,308.2" fill="none" stroke="#dadada" stroke-width="1" />
<text x="1559" y="301" font-family="Liberation Sans" font-size="23.5" fill="#8a8a8a" text-anchor="end" font-weight="normal" xml:space="preserve" >1</text>
<rect x="1572.5" y="272.5" width="33" height="36.5" rx="0" fill="#f0f0f0" stroke="#c9c9c9" stroke-width="1" />
<line x1="1573" y1="291.1" x2="1605" y2="291.1" stroke="#d6d6d6" stroke-width="1.4" />
<path d="M1583.8,284 L1594,284 L1588.9,278.3 Z" fill="#6d6d6d" />
<path d="M1583.8,296.7 L1594,296.7 L1588.9,302.8 Z" fill="#6d6d6d" />
<rect x="1621" y="288.2" width="7.8" height="15.7" rx="0" fill="#2e6db4" />
<rect x="1631.4" y="276" width="7.4" height="27.9" rx="0" fill="#2e6db4" />
<rect x="1641.2" y="282" width="7.7" height="21.9" rx="0" fill="#2e6db4" />
<g transform="translate(1633.2,306.7) rotate(-44.3)"><rect x="5" y="-2.9" width="23.5" height="5.8" fill="#efefef"/><path d="M-0.8,0 L6,-3.6 L6,3.6 Z" fill="#efefef"/><path d="M0.6,0 L5.2,-2.1 L5.2,2.1 Z" fill="#2e6db4"/><rect x="6.2" y="-1.9" width="15.2" height="3.8" fill="#2e6db4"/><rect x="22.4" y="-1.9" width="4.6" height="3.8" rx="1" fill="#2e6db4"/></g>
<path d="M1698,288 L1698,278 L1670,278 L1670,303.3 L1692.5,303.3" fill="none" stroke="#555" stroke-width="1.3" />
<rect x="1670.5" y="279" width="27" height="24" rx="0" fill="#fff" />
<rect x="1669.3" y="277.1" width="29.3" height="5" rx="0" fill="#3d79bb" />
<circle cx="1695.9" cy="292.6" r="5.2" fill="#3d79bb" />
<rect x="1694.3" y="288.5" width="3.2" height="5.5" rx="0" fill="#fff" />
<rect x="1693.5" y="295" width="4.8" height="11.7" rx="2" fill="#3d79bb" />
<rect x="1695.2" y="304.2" width="1.5" height="1.5" rx="0" fill="#cfe0f0" />
<line x1="1138.4" y1="1012.3" x2="1138.4" y2="451.3" stroke="#dcdcdc" stroke-width="1.4" />
<line x1="1266.4" y1="1012.3" x2="1266.4" y2="451.3" stroke="#dcdcdc" stroke-width="1.4" />
<line x1="1394.4" y1="1012.3" x2="1394.4" y2="451.3" stroke="#dcdcdc" stroke-width="1.4" />
<line x1="1522.4" y1="1012.3" x2="1522.4" y2="451.3" stroke="#dcdcdc" stroke-width="1.4" />
<line x1="1650.4" y1="1012.3" x2="1650.4" y2="451.3" stroke="#dcdcdc" stroke-width="1.4" />
<line x1="1778.4" y1="1012.3" x2="1778.4" y2="451.3" stroke="#dcdcdc" stroke-width="1.4" />
<line x1="1906.4" y1="1012.3" x2="1906.4" y2="451.3" stroke="#dcdcdc" stroke-width="1.4" />
<line x1="1010.4" y1="956.1999999999999" x2="2034.4" y2="956.1999999999999" stroke="#dcdcdc" stroke-width="1.4" />
<line x1="1010.4" y1="900.0999999999999" x2="2034.4" y2="900.0999999999999" stroke="#dcdcdc" stroke-width="1.4" />
<line x1="1010.4" y1="844.0" x2="2034.4" y2="844.0" stroke="#dcdcdc" stroke-width="1.4" />
<line x1="1010.4" y1="787.9" x2="2034.4" y2="787.9" stroke="#dcdcdc" stroke-width="1.4" />
<line x1="1010.4" y1="731.8" x2="2034.4" y2="731.8" stroke="#dcdcdc" stroke-width="1.4" />
<line x1="1010.4" y1="675.6999999999999" x2="2034.4" y2="675.6999999999999" stroke="#dcdcdc" stroke-width="1.4" />
<line x1="1010.4" y1="619.5999999999999" x2="2034.4" y2="619.5999999999999" stroke="#dcdcdc" stroke-width="1.4" />
<line x1="1010.4" y1="563.5" x2="2034.4" y2="563.5" stroke="#dcdcdc" stroke-width="1.4" />
<line x1="1010.4" y1="507.3999999999999" x2="2034.4" y2="507.3999999999999" stroke="#dcdcdc" stroke-width="1.4" />
<rect x="1010.4" y="451.3" width="1024.0" height="561.0" rx="0" fill="none" stroke="#404040" stroke-width="1.3" />
<line x1="1007.4" y1="1012.3" x2="1010.4" y2="1012.3" stroke="#404040" stroke-width="1.2" />
<line x1="1007.4" y1="984.25" x2="1010.4" y2="984.25" stroke="#404040" stroke-width="1.2" />
<line x1="1007.4" y1="956.1999999999999" x2="1010.4" y2="956.1999999999999" stroke="#404040" stroke-width="1.2" />
<line x1="1007.4" y1="928.15" x2="1010.4" y2="928.15" stroke="#404040" stroke-width="1.2" />
<line x1="1007.4" y1="900.0999999999999" x2="1010.4" y2="900.0999999999999" stroke="#404040" stroke-width="1.2" />
<line x1="1007.4" y1="872.05" x2="1010.4" y2="872.05" stroke="#404040" stroke-width="1.2" />
<line x1="1007.4" y1="844.0" x2="1010.4" y2="844.0" stroke="#404040" stroke-width="1.2" />
<line x1="1007.4" y1="815.9499999999999" x2="1010.4" y2="815.9499999999999" stroke="#404040" stroke-width="1.2" />
<line x1="1007.4" y1="787.9" x2="1010.4" y2="787.9" stroke="#404040" stroke-width="1.2" />
<line x1="1007.4" y1="759.8499999999999" x2="1010.4" y2="759.8499999999999" stroke="#404040" stroke-width="1.2" />
<line x1="1007.4" y1="731.8" x2="1010.4" y2="731.8" stroke="#404040" stroke-width="1.2" />
<line x1="1007.4" y1="703.75" x2="1010.4" y2="703.75" stroke="#404040" stroke-width="1.2" />
<line x1="1007.4" y1="675.6999999999999" x2="1010.4" y2="675.6999999999999" stroke="#404040" stroke-width="1.2" />
<line x1="1007.4" y1="647.6499999999999" x2="1010.4" y2="647.6499999999999" stroke="#404040" stroke-width="1.2" />
<line x1="1007.4" y1="619.5999999999999" x2="1010.4" y2="619.5999999999999" stroke="#404040" stroke-width="1.2" />
<line x1="1007.4" y1="591.55" x2="1010.4" y2="591.55" stroke="#404040" stroke-width="1.2" />
<line x1="1007.4" y1="563.5" x2="1010.4" y2="563.5" stroke="#404040" stroke-width="1.2" />
<line x1="1007.4" y1="535.4499999999999" x2="1010.4" y2="535.4499999999999" stroke="#404040" stroke-width="1.2" />
<line x1="1007.4" y1="507.3999999999999" x2="1010.4" y2="507.3999999999999" stroke="#404040" stroke-width="1.2" />
<line x1="1007.4" y1="479.3499999999999" x2="1010.4" y2="479.3499999999999" stroke="#404040" stroke-width="1.2" />
<line x1="1007.4" y1="451.29999999999995" x2="1010.4" y2="451.29999999999995" stroke="#404040" stroke-width="1.2" />
<line x1="1010.4" y1="1012.3" x2="1010.4" y2="1015.8" stroke="#404040" stroke-width="1.4" />
<line x1="1138.4" y1="1012.3" x2="1138.4" y2="1015.8" stroke="#404040" stroke-width="1.4" />
<line x1="1266.4" y1="1012.3" x2="1266.4" y2="1015.8" stroke="#404040" stroke-width="1.4" />
<line x1="1394.4" y1="1012.3" x2="1394.4" y2="1015.8" stroke="#404040" stroke-width="1.4" />
<line x1="1522.4" y1="1012.3" x2="1522.4" y2="1015.8" stroke="#404040" stroke-width="1.4" />
<line x1="1650.4" y1="1012.3" x2="1650.4" y2="1015.8" stroke="#404040" stroke-width="1.4" />
<line x1="1778.4" y1="1012.3" x2="1778.4" y2="1015.8" stroke="#404040" stroke-width="1.4" />
<line x1="1906.4" y1="1012.3" x2="1906.4" y2="1015.8" stroke="#404040" stroke-width="1.4" />
<line x1="2034.4" y1="1012.3" x2="2034.4" y2="1015.8" stroke="#404040" stroke-width="1.4" />
<text x="1005.5" y="1023.3" font-family="Liberation Sans" font-size="21.5" fill="#333" text-anchor="end" font-weight="normal" xml:space="preserve" >0</text>
<text x="1005.5" y="967.1999999999999" font-family="Liberation Sans" font-size="21.5" fill="#333" text-anchor="end" font-weight="normal" xml:space="preserve" >1</text>
<text x="1005.5" y="911.0999999999999" font-family="Liberation Sans" font-size="21.5" fill="#333" text-anchor="end" font-weight="normal" xml:space="preserve" >2</text>
<text x="1005.5" y="855.0" font-family="Liberation Sans" font-size="21.5" fill="#333" text-anchor="end" font-weight="normal" xml:space="preserve" >3</text>
<text x="1005.5" y="798.9" font-family="Liberation Sans" font-size="21.5" fill="#333" text-anchor="end" font-weight="normal" xml:space="preserve" >4</text>
<text x="1005.5" y="742.8" font-family="Liberation Sans" font-size="21.5" fill="#333" text-anchor="end" font-weight="normal" xml:space="preserve" >5</text>
<text x="1005.5" y="686.6999999999999" font-family="Liberation Sans" font-size="21.5" fill="#333" text-anchor="end" font-weight="normal" xml:space="preserve" >6</text>
<text x="1005.5" y="630.5999999999999" font-family="Liberation Sans" font-size="21.5" fill="#333" text-anchor="end" font-weight="normal" xml:space="preserve" >7</text>
<text x="1005.5" y="574.5" font-family="Liberation Sans" font-size="21.5" fill="#333" text-anchor="end" font-weight="normal" xml:space="preserve" >8</text>
<text x="1005.5" y="518.3999999999999" font-family="Liberation Sans" font-size="21.5" fill="#333" text-anchor="end" font-weight="normal" xml:space="preserve" >9</text>
<text x="1005.5" y="462.29999999999995" font-family="Liberation Sans" font-size="21.5" fill="#333" text-anchor="end" font-weight="normal" xml:space="preserve" >10</text>
<text x="1010.4" y="1052" font-family="Liberation Sans" font-size="21.5" fill="#000" text-anchor="middle" font-weight="normal" xml:space="preserve" textLength="49.7" lengthAdjust="spacingAndGlyphs" >1974</text>
<text x="1138.4" y="1052" font-family="Liberation Sans" font-size="21.5" fill="#000" text-anchor="middle" font-weight="normal" xml:space="preserve" textLength="49.7" lengthAdjust="spacingAndGlyphs" >1976</text>
<text x="1266.4" y="1052" font-family="Liberation Sans" font-size="21.5" fill="#000" text-anchor="middle" font-weight="normal" xml:space="preserve" textLength="49.7" lengthAdjust="spacingAndGlyphs" >1978</text>
<text x="1394.4" y="1052" font-family="Liberation Sans" font-size="21.5" fill="#000" text-anchor="middle" font-weight="normal" xml:space="preserve" textLength="49.7" lengthAdjust="spacingAndGlyphs" >1980</text>
<text x="1522.4" y="1052" font-family="Liberation Sans" font-size="21.5" fill="#000" text-anchor="middle" font-weight="normal" xml:space="preserve" textLength="49.7" lengthAdjust="spacingAndGlyphs" >1982</text>
<text x="1650.4" y="1052" font-family="Liberation Sans" font-size="21.5" fill="#000" text-anchor="middle" font-weight="normal" xml:space="preserve" textLength="49.7" lengthAdjust="spacingAndGlyphs" >1984</text>
<text x="1778.4" y="1052" font-family="Liberation Sans" font-size="21.5" fill="#000" text-anchor="middle" font-weight="normal" xml:space="preserve" textLength="49.7" lengthAdjust="spacingAndGlyphs" >1986</text>
<text x="1906.4" y="1052" font-family="Liberation Sans" font-size="21.5" fill="#000" text-anchor="middle" font-weight="normal" xml:space="preserve" textLength="49.7" lengthAdjust="spacingAndGlyphs" >1988</text>
<text x="2034.4" y="1052" font-family="Liberation Sans" font-size="21.5" fill="#000" text-anchor="middle" font-weight="normal" xml:space="preserve" textLength="49.7" lengthAdjust="spacingAndGlyphs" >1990</text>
<text x="1350.3" y="386.9" font-family="Liberation Sans" font-size="32" fill="#3a3a3a" text-anchor="start" font-weight="normal" xml:space="preserve" textLength="272" lengthAdjust="spacingAndGlyphs" >Watershed Runoff</text>
<text x="1517.7" y="1106.8" font-family="Liberation Sans" font-size="27" fill="#333" text-anchor="middle" font-weight="normal" xml:space="preserve" textLength="64" lengthAdjust="spacingAndGlyphs" >Time</text>
<text x="0" y="0" font-family="Liberation Sans" font-size="28" fill="#333" text-anchor="middle" textLength="218" lengthAdjust="spacingAndGlyphs" transform="translate(952.2,730) rotate(-90)">Flow Rate (m3/s)</text>
<path d="M1010.40,1012.30 L1010.95,1007.85 L1011.25,1007.85 L1011.50,978.64 L1011.85,997.79 L1012.42,1004.10 L1012.75,1004.10 L1013.00,950.59 L1013.35,990.90 L1013.92,1001.89 L1014.25,1001.89 L1014.50,894.49 L1014.85,970.19 L1015.42,983.73 L1015.75,983.73 L1016.00,928.15 L1016.35,989.09 L1017.58,994.39 L1018.55,994.39 L1018.80,717.77 L1019.15,902.34 L1019.58,980.66 L1019.75,980.66 L1020.00,849.61 L1020.35,940.52 L1020.67,953.30 L1020.75,953.30 L1021.00,900.10 L1021.35,957.51 L1021.67,981.54 L1021.75,981.54 L1022.00,872.05 L1022.35,959.31 L1022.67,974.06 L1022.75,974.06 L1023.00,922.54 L1023.35,971.97 L1023.67,967.46 L1023.75,967.46 L1024.00,821.56 L1024.35,933.98 L1024.67,958.46 L1024.75,958.46 L1025.00,866.44 L1025.35,952.72 L1025.67,952.04 L1025.75,952.04 L1026.00,888.88 L1026.35,960.61 L1026.82,949.47 L1027.05,949.47 L1027.30,922.54 L1027.65,950.07 L1028.40,962.93 L1029.41,965.03 L1030.42,967.04 L1031.42,968.97 L1032.43,970.82 L1033.44,972.60 L1034.45,974.31 L1034.65,968.54 L1034.95,969.70 L1035.46,975.96 L1036.46,977.53 L1037.47,979.05 L1038.48,980.50 L1039.49,981.90 L1040.50,983.24 L1040.70,980.76 L1041.00,981.26 L1041.51,984.53 L1042.51,985.76 L1043.52,986.95 L1044.53,988.09 L1045.54,989.19 L1045.74,986.05 L1046.04,986.68 L1046.55,990.24 L1047.55,991.25 L1048.56,992.22 L1048.76,990.21 L1049.06,990.61 L1049.57,993.15 L1050.58,994.04 L1051.59,994.90 L1051.79,993.34 L1052.09,993.65 L1052.59,995.72 L1052.79,994.61 L1053.09,994.83 L1053.60,996.51 L1054.61,997.27 L1055.62,998.00 L1056.63,998.71 L1057.64,999.38 L1058.64,1000.03 L1059.65,1000.65 L1060.66,1001.24 L1061.67,1001.81 L1062.68,1002.36 L1063.68,1002.89 L1064.69,1003.40 L1065.70,1003.88 L1067.50,1003.88 L1067.75,1007.12 L1067.75,1007.12 L1068.00,961.81 L1068.35,996.55 L1068.92,1003.44 L1069.25,1003.44 L1069.50,989.86 L1069.85,998.59 L1070.42,999.26 L1070.75,999.26 L1071.00,956.20 L1071.35,995.18 L1072.17,1000.23 L1072.75,1000.23 L1073.00,933.76 L1073.35,977.53 L1074.17,986.84 L1074.75,986.84 L1075.00,883.27 L1075.35,957.95 L1075.67,989.90 L1075.75,989.90 L1076.00,928.15 L1076.35,977.50 L1076.67,978.40 L1076.75,978.40 L1077.00,883.27 L1077.35,954.58 L1077.67,984.46 L1077.75,984.46 L1078.00,922.54 L1078.35,977.01 L1078.67,981.23 L1078.75,981.23 L1079.00,883.27 L1079.35,976.24 L1080.17,985.38 L1080.75,985.38 L1081.00,900.10 L1081.35,968.22 L1082.17,968.25 L1082.75,968.25 L1083.00,827.17 L1083.35,954.30 L1083.67,945.93 L1083.75,945.93 L1084.00,877.66 L1084.35,962.00 L1084.97,948.77 L1085.35,948.77 L1085.60,748.63 L1085.95,949.41 L1086.47,929.74 L1086.75,929.74 L1087.00,799.12 L1087.35,930.76 L1087.67,961.92 L1087.75,961.92 L1088.00,888.88 L1088.35,940.90 L1088.67,966.08 L1088.75,966.08 L1089.00,849.61 L1089.35,933.49 L1090.17,946.89 L1090.75,946.89 L1091.00,672.89 L1091.35,935.61 L1091.67,962.78 L1091.75,962.78 L1092.00,905.71 L1092.35,924.67 L1092.67,953.39 L1092.75,953.39 L1093.00,928.15 L1093.35,961.98 L1094.00,955.53 L1095.01,957.80 L1096.03,959.98 L1097.04,962.08 L1098.05,964.09 L1099.07,966.03 L1100.08,967.89 L1100.28,964.01 L1100.58,964.79 L1101.09,969.68 L1102.11,971.40 L1103.12,973.06 L1104.13,974.65 L1105.14,976.18 L1106.16,977.65 L1107.17,979.06 L1107.37,976.00 L1107.67,976.61 L1108.18,980.42 L1109.20,981.73 L1109.40,979.25 L1109.70,979.74 L1110.21,982.98 L1111.22,984.19 L1112.24,985.35 L1113.25,986.47 L1114.26,987.54 L1115.28,988.57 L1116.29,989.56 L1117.30,990.51 L1118.32,991.43 L1119.33,992.31 L1120.34,993.15 L1120.54,991.96 L1120.84,992.20 L1121.36,993.97 L1122.37,994.75 L1123.38,995.50 L1124.39,996.22 L1125.41,996.92 L1126.42,997.58 L1127.43,998.23 L1128.45,998.84 L1129.46,999.44 L1130.47,1000.01 L1131.49,1000.55 L1132.50,1001.08 L1132.50,1001.08 L1133.00,1000.05 L1133.25,1000.05 L1133.50,824.37 L1133.85,929.48 L1134.42,995.52 L1134.75,995.52 L1135.00,928.15 L1135.35,979.99 L1135.67,977.99 L1135.75,977.99 L1136.00,866.44 L1136.35,946.69 L1136.92,987.94 L1137.25,987.94 L1137.50,911.32 L1137.85,972.64 L1138.42,963.00 L1138.75,963.00 L1139.00,670.09 L1139.35,883.66 L1139.92,936.02 L1140.25,936.02 L1140.50,844.00 L1140.85,932.97 L1141.42,941.38 L1141.75,941.38 L1142.00,580.33 L1142.35,831.83 L1142.67,938.76 L1142.75,938.76 L1143.00,844.00 L1143.35,923.52 L1143.67,934.49 L1143.75,934.49 L1144.00,799.12 L1144.35,929.94 L1144.92,933.76 L1145.25,933.76 L1145.50,900.10 L1145.85,940.95 L1146.42,940.06 L1146.75,940.06 L1147.00,844.00 L1147.35,927.13 L1147.67,936.71 L1147.75,936.71 L1148.00,888.88 L1148.35,955.58 L1148.67,949.62 L1148.75,949.62 L1149.00,810.34 L1149.35,929.58 L1149.67,969.90 L1149.75,969.90 L1150.00,900.10 L1150.35,944.78 L1150.67,950.62 L1150.75,950.62 L1151.00,872.05 L1151.35,955.53 L1151.67,949.47 L1151.75,949.47 L1152.00,922.54 L1152.35,961.13 L1152.67,946.08 L1152.75,946.08 L1153.00,866.44 L1153.35,967.20 L1153.92,969.20 L1154.25,969.20 L1154.50,928.15 L1154.85,959.99 L1155.22,978.30 L1155.35,978.30 L1155.60,675.70 L1155.95,889.44 L1156.47,948.03 L1156.75,948.03 L1157.00,804.73 L1157.35,924.14 L1158.00,955.53 L1159.00,957.88 L1160.00,960.14 L1161.00,962.31 L1162.00,964.40 L1163.00,966.42 L1164.00,968.35 L1165.00,970.22 L1166.00,972.01 L1167.00,973.74 L1168.00,975.40 L1169.00,977.00 L1170.00,978.54 L1171.00,980.02 L1172.00,981.44 L1173.00,982.81 L1174.00,984.13 L1175.00,985.40 L1176.00,986.62 L1177.00,987.80 L1178.00,988.93 L1179.00,990.02 L1180.00,991.07 L1181.00,992.07 L1182.00,993.04 L1183.00,993.98 L1184.00,994.87 L1185.00,995.74 L1186.00,996.57 L1187.00,997.37 L1188.00,998.14 L1189.00,998.88 L1190.00,999.59 L1191.00,1000.28 L1192.00,1000.94 L1193.00,1001.58 L1194.00,1002.19 L1195.00,1002.77 L1196.00,1003.34 L1197.00,1003.88 L1199.00,1003.88 L1199.50,1005.62 L1199.75,1005.62 L1200.00,933.76 L1200.35,995.97 L1201.17,993.56 L1201.75,993.56 L1202.00,866.44 L1202.35,957.29 L1202.92,984.40 L1203.25,984.40 L1203.50,928.15 L1203.85,978.82 L1204.42,994.48 L1204.75,994.48 L1205.00,759.85 L1205.35,933.10 L1205.67,982.95 L1205.75,982.95 L1206.00,872.05 L1206.35,952.54 L1206.67,977.46 L1206.75,977.46 L1207.00,827.17 L1207.35,946.15 L1207.67,960.40 L1207.75,960.40 L1208.00,922.54 L1208.35,958.32 L1208.67,951.85 L1208.75,951.85 L1209.00,888.88 L1209.35,949.33 L1209.67,975.57 L1209.75,975.57 L1210.00,939.37 L1210.35,968.88 L1210.67,986.02 L1210.75,986.02 L1211.00,852.41 L1211.35,951.78 L1211.67,976.72 L1211.75,976.72 L1212.00,916.93 L1212.35,972.48 L1212.67,960.74 L1212.75,960.74 L1213.00,849.61 L1213.35,954.77 L1213.67,957.32 L1213.75,957.32 L1214.00,933.76 L1214.35,969.75 L1214.67,954.13 L1214.75,954.13 L1215.00,916.93 L1215.35,970.99 L1216.17,973.03 L1216.75,973.03 L1217.00,956.20 L1217.35,982.56 L1217.92,973.03 L1218.25,973.03 L1218.50,956.20 L1218.85,969.80 L1219.92,977.26 L1220.75,977.26 L1221.00,961.81 L1221.35,974.35 L1222.17,971.64 L1222.75,971.64 L1223.00,860.83 L1223.35,957.34 L1223.67,983.19 L1223.75,983.19 L1224.00,950.59 L1224.35,972.10 L1225.00,967.87 L1226.00,969.53 L1227.00,971.14 L1228.00,972.69 L1229.00,974.18 L1230.00,975.62 L1231.00,977.01 L1232.00,978.34 L1233.00,979.63 L1234.00,980.88 L1235.00,982.07 L1236.00,983.23 L1237.00,984.34 L1238.00,985.42 L1239.00,986.45 L1240.00,987.45 L1240.20,984.64 L1240.50,985.20 L1241.00,988.41 L1242.00,989.34 L1243.00,990.23 L1244.00,991.09 L1244.20,987.76 L1244.50,988.43 L1245.00,991.93 L1245.20,988.75 L1245.50,989.38 L1246.00,992.73 L1247.00,993.50 L1248.00,994.24 L1249.00,994.96 L1250.00,995.65 L1251.00,996.32 L1252.00,996.97 L1253.00,997.59 L1254.00,998.18 L1255.00,998.76 L1256.00,999.32 L1257.00,999.85 L1258.00,1000.37 L1259.00,1000.87 L1260.00,1001.35 L1261.00,1001.81 L1262.00,1002.25 L1263.00,1002.68 L1264.00,1003.10 L1265.00,1003.50 L1266.00,1003.88 L1264.60,1003.88 L1265.30,1004.32 L1265.75,1004.32 L1266.00,978.64 L1266.35,999.24 L1267.17,998.70 L1267.75,998.70 L1268.00,939.37 L1268.35,993.68 L1269.17,995.86 L1269.75,995.86 L1270.00,956.20 L1270.35,990.86 L1271.03,991.58 L1271.45,991.58 L1271.70,852.41 L1272.05,946.60 L1272.53,980.09 L1272.75,980.09 L1273.00,939.37 L1273.35,984.27 L1273.67,973.38 L1273.75,973.38 L1274.00,900.10 L1274.35,968.53 L1274.67,968.42 L1274.75,968.42 L1275.00,922.54 L1275.35,966.56 L1275.67,975.50 L1275.75,975.50 L1276.00,737.41 L1276.35,920.49 L1276.67,958.74 L1276.75,958.74 L1277.00,872.05 L1277.35,954.17 L1277.67,939.51 L1277.75,939.51 L1278.00,768.26 L1278.35,939.05 L1278.67,957.32 L1278.75,957.32 L1279.00,933.76 L1279.35,954.74 L1279.67,965.18 L1279.75,965.18 L1280.00,944.98 L1280.35,976.84 L1280.92,973.03 L1281.25,973.03 L1281.50,956.20 L1281.85,960.32 L1282.62,979.77 L1283.15,979.77 L1283.40,852.41 L1283.75,966.15 L1284.03,973.03 L1284.05,973.03 L1284.30,956.20 L1284.65,964.33 L1285.00,972.81 L1286.01,974.25 L1287.02,975.65 L1288.03,977.00 L1289.04,978.30 L1290.05,979.56 L1291.06,980.77 L1292.07,981.94 L1293.07,983.08 L1294.08,984.17 L1295.09,985.23 L1295.29,982.97 L1295.59,983.42 L1296.10,986.25 L1297.11,987.23 L1298.12,988.18 L1299.13,989.10 L1300.14,989.99 L1301.15,990.84 L1301.35,987.67 L1301.65,988.31 L1302.16,991.67 L1303.17,992.47 L1304.18,993.24 L1305.19,993.99 L1306.20,994.71 L1307.20,995.40 L1308.21,996.07 L1309.22,996.72 L1310.23,997.35 L1311.24,997.95 L1312.25,998.53 L1313.26,999.10 L1314.27,999.64 L1315.28,1000.17 L1316.29,1000.68 L1317.30,1001.17 L1318.31,1001.64 L1319.32,1002.10 L1320.33,1002.54 L1321.33,1002.97 L1322.34,1003.38 L1323.35,1003.77 L1324.36,1004.16 L1325.37,1004.53 L1326.38,1004.89 L1327.39,1005.23 L1328.40,1005.57 L1330.00,1005.57 L1330.50,1005.21 L1330.75,1005.21 L1331.00,883.27 L1331.35,958.86 L1331.57,997.69 L1331.55,997.69 L1331.80,473.74 L1332.15,795.46 L1332.57,922.56 L1332.75,922.56 L1333.00,555.08 L1333.35,884.85 L1333.67,907.41 L1333.75,907.41 L1334.00,613.99 L1334.35,833.22 L1334.67,909.60 L1334.75,909.60 L1335.00,743.02 L1335.35,942.33 L1335.67,925.91 L1335.75,925.91 L1336.00,888.88 L1336.35,951.14 L1336.67,933.76 L1336.75,933.76 L1337.00,900.10 L1337.35,951.99 L1337.67,969.02 L1337.75,969.02 L1338.00,933.76 L1338.35,961.23 L1338.67,979.70 L1338.75,979.70 L1339.00,922.54 L1339.35,971.93 L1339.67,965.18 L1339.75,965.18 L1340.00,944.98 L1340.35,957.37 L1340.67,970.32 L1340.75,970.32 L1341.00,939.37 L1341.35,966.81 L1341.67,969.10 L1341.75,969.10 L1342.00,950.59 L1342.35,983.01 L1342.67,988.30 L1342.75,988.30 L1343.00,944.98 L1343.35,987.65 L1343.67,979.05 L1343.75,979.05 L1344.00,956.20 L1344.35,979.70 L1344.67,989.45 L1344.75,989.45 L1345.00,933.76 L1345.35,980.09 L1345.92,969.44 L1346.25,969.44 L1346.50,944.98 L1346.85,973.43 L1347.32,992.55 L1347.55,992.55 L1347.80,765.46 L1348.15,934.42 L1348.57,955.02 L1348.75,955.02 L1349.00,911.32 L1349.35,970.63 L1350.00,970.34 L1351.01,971.89 L1352.01,973.39 L1353.02,974.84 L1354.03,976.24 L1355.03,977.60 L1356.04,978.90 L1356.24,974.09 L1356.54,975.05 L1357.05,980.16 L1358.06,981.38 L1359.06,982.56 L1360.07,983.69 L1361.08,984.79 L1362.08,985.85 L1363.09,986.87 L1364.10,987.86 L1365.10,988.81 L1365.30,984.89 L1365.60,985.67 L1366.11,989.73 L1367.12,990.62 L1368.13,991.48 L1369.13,992.31 L1370.14,993.11 L1371.15,993.89 L1372.15,994.64 L1373.16,995.36 L1374.17,996.05 L1375.17,996.73 L1376.18,997.38 L1377.19,998.00 L1378.20,998.61 L1379.20,999.20 L1380.21,999.76 L1381.22,1000.31 L1382.22,1000.84 L1383.23,1001.34 L1384.24,1001.84 L1385.24,1002.31 L1386.25,1002.77 L1387.26,1003.21 L1388.27,1003.64 L1389.27,1004.05 L1390.28,1004.45 L1391.29,1004.84 L1392.29,1005.21 L1393.30,1005.57 L1395.00,1005.57 L1395.50,1005.01 L1395.75,1005.01 L1396.00,781.17 L1396.35,925.93 L1396.67,977.65 L1396.75,977.65 L1397.00,944.98 L1397.35,978.29 L1397.67,978.74 L1397.75,978.74 L1398.00,928.15 L1398.35,988.28 L1398.67,982.87 L1398.75,982.87 L1399.00,956.20 L1399.35,991.37 L1399.67,980.66 L1399.75,980.66 L1400.00,905.71 L1400.35,976.52 L1400.67,968.59 L1400.75,968.59 L1401.00,944.98 L1401.35,977.04 L1402.07,977.20 L1402.55,977.20 L1402.80,855.22 L1403.15,959.95 L1403.57,976.49 L1403.75,976.49 L1404.00,956.20 L1404.35,965.82 L1404.67,971.91 L1404.75,971.91 L1405.00,939.37 L1405.35,972.50 L1405.92,991.41 L1406.25,991.41 L1406.50,961.81 L1406.85,978.98 L1407.42,987.82 L1407.75,987.82 L1408.00,928.15 L1408.35,981.84 L1408.67,988.45 L1408.75,988.45 L1409.00,950.59 L1409.35,983.72 L1409.67,988.25 L1409.75,988.25 L1410.00,866.44 L1410.35,963.07 L1410.67,974.83 L1410.75,974.83 L1411.00,928.15 L1411.35,964.69 L1412.00,977.74 L1413.00,979.29 L1414.00,980.77 L1415.00,982.18 L1416.00,983.54 L1417.00,984.83 L1417.20,981.22 L1417.50,981.94 L1418.00,986.07 L1419.00,987.26 L1419.20,982.96 L1419.50,983.82 L1420.00,988.39 L1421.00,989.48 L1422.00,990.52 L1423.00,991.51 L1424.00,992.47 L1425.00,993.38 L1425.20,990.09 L1425.50,990.75 L1426.00,994.25 L1427.00,995.08 L1428.00,995.88 L1429.00,996.64 L1430.00,997.37 L1431.00,998.07 L1432.00,998.74 L1433.00,999.38 L1434.00,999.99 L1435.00,1000.58 L1436.00,1001.14 L1437.00,1001.67 L1438.00,1002.19 L1439.00,1002.68 L1440.00,1003.15 L1441.00,1003.60 L1442.00,1004.03 L1443.00,1004.44 L1444.00,1004.83 L1445.00,1005.21 L1446.00,1005.57 L1460.00,1005.57 L1460.50,1008.87 L1460.75,1008.87 L1461.00,866.44 L1461.35,981.57 L1461.92,997.58 L1462.25,997.58 L1462.50,928.15 L1462.85,983.50 L1463.32,980.38 L1463.55,980.38 L1463.80,812.58 L1464.15,966.67 L1464.57,958.78 L1464.75,958.78 L1465.00,922.54 L1465.35,963.19 L1465.67,962.44 L1465.75,962.44 L1466.00,860.83 L1466.35,963.92 L1466.67,952.86 L1466.75,952.86 L1467.00,911.32 L1467.35,975.42 L1467.67,955.62 L1467.75,955.62 L1468.00,855.22 L1468.35,957.63 L1468.67,957.32 L1468.75,957.32 L1469.00,933.76 L1469.35,960.40 L1469.67,982.71 L1469.75,982.71 L1470.00,922.54 L1470.35,967.56 L1470.92,981.28 L1471.25,981.28 L1471.50,950.59 L1471.85,984.77 L1472.17,986.76 L1472.25,986.76 L1472.50,944.98 L1472.85,978.53 L1473.42,979.57 L1473.75,979.57 L1474.00,697.02 L1474.35,903.35 L1474.67,959.10 L1474.75,959.10 L1475.00,928.15 L1475.35,952.43 L1475.67,949.47 L1475.75,949.47 L1476.00,922.54 L1476.35,952.68 L1476.67,976.02 L1476.75,976.02 L1477.00,944.98 L1477.35,980.05 L1478.00,980.21 L1479.02,981.41 L1480.04,982.57 L1481.05,983.68 L1482.07,984.76 L1483.09,985.79 L1484.11,986.79 L1485.12,987.75 L1486.14,988.67 L1487.16,989.56 L1488.17,990.42 L1489.19,991.24 L1490.21,992.04 L1491.23,992.80 L1492.25,993.54 L1493.26,994.25 L1494.28,994.94 L1495.30,995.60 L1495.50,994.47 L1495.80,994.70 L1496.32,996.23 L1497.33,996.84 L1498.35,997.43 L1499.37,998.00 L1499.57,996.21 L1499.87,996.57 L1500.38,998.55 L1500.59,997.58 L1500.88,997.77 L1501.40,999.07 L1502.42,999.58 L1503.44,1000.07 L1504.45,1000.54 L1505.47,1000.99 L1506.49,1001.43 L1507.51,1001.85 L1508.53,1002.25 L1509.54,1002.64 L1510.56,1003.02 L1511.58,1003.38 L1512.60,1003.73 L1513.61,1004.07 L1514.63,1004.39 L1515.65,1004.70 L1516.66,1005.00 L1517.68,1005.29 L1518.70,1005.57 L1520.50,1005.57 L1521.15,1008.01 L1521.55,1008.01 L1521.80,866.44 L1522.15,955.97 L1522.57,986.74 L1522.75,986.74 L1523.00,950.59 L1523.35,995.24 L1523.67,984.83 L1523.75,984.83 L1524.00,939.37 L1524.35,983.70 L1524.92,993.31 L1525.25,993.31 L1525.50,961.81 L1525.85,988.65 L1526.88,982.41 L1527.65,982.41 L1527.90,850.17 L1528.25,953.38 L1528.62,965.18 L1528.75,965.18 L1529.00,944.98 L1529.35,981.96 L1529.67,973.12 L1529.75,973.12 L1530.00,944.98 L1530.35,971.83 L1530.92,984.05 L1531.25,984.05 L1531.50,961.81 L1531.85,989.59 L1532.42,993.00 L1532.75,993.00 L1533.00,911.32 L1533.35,977.86 L1533.67,980.61 L1533.75,980.61 L1534.00,950.59 L1534.35,977.55 L1534.67,975.29 L1534.75,975.29 L1535.00,866.44 L1535.35,975.35 L1536.07,969.92 L1536.55,969.92 L1536.80,811.46 L1537.15,956.88 L1537.57,955.74 L1537.75,955.74 L1538.00,866.44 L1538.35,955.00 L1538.67,976.42 L1538.75,976.42 L1539.00,944.98 L1539.35,971.27 L1539.67,973.42 L1539.75,973.42 L1540.00,862.51 L1540.35,955.78 L1540.67,969.10 L1540.75,969.10 L1541.00,950.59 L1541.35,959.74 L1541.50,971.82 L1542.51,973.46 L1543.53,975.03 L1544.54,976.55 L1545.55,978.01 L1546.56,979.42 L1547.58,980.77 L1548.59,982.07 L1549.60,983.32 L1550.62,984.53 L1551.63,985.69 L1552.64,986.80 L1553.65,987.88 L1554.67,988.91 L1555.68,989.91 L1556.69,990.86 L1557.71,991.78 L1558.72,992.67 L1559.73,993.52 L1560.74,994.34 L1561.76,995.13 L1562.77,995.89 L1563.78,996.62 L1564.79,997.32 L1565.81,998.00 L1566.82,998.65 L1567.83,999.28 L1568.03,997.69 L1568.33,998.01 L1568.85,999.88 L1569.86,1000.46 L1570.87,1001.02 L1571.88,1001.56 L1572.90,1002.08 L1573.91,1002.57 L1574.92,1003.05 L1575.94,1003.51 L1576.95,1003.96 L1577.96,1004.38 L1578.97,1004.79 L1579.99,1005.19 L1581.00,1005.57 L1582.00,1005.57 L1582.25,1006.45 L1582.25,1006.45 L1582.50,922.54 L1582.85,979.73 L1583.42,994.17 L1583.75,994.17 L1584.00,973.03 L1584.35,999.08 L1585.17,1000.52 L1585.75,1000.52 L1586.00,995.47 L1586.35,1000.86 L1587.57,994.85 L1588.55,994.85 L1588.80,920.86 L1589.15,985.34 L1589.57,988.87 L1589.75,988.87 L1590.00,967.42 L1590.35,994.96 L1590.67,988.69 L1590.75,988.69 L1591.00,956.20 L1591.35,992.85 L1592.17,1000.52 L1592.75,1000.52 L1593.00,995.47 L1593.35,992.42 L1594.17,994.83 L1594.75,994.83 L1595.00,961.81 L1595.35,989.98 L1596.17,996.59 L1596.75,996.59 L1597.00,989.86 L1597.35,993.61 L1598.07,990.93 L1598.55,990.93 L1598.80,905.71 L1599.15,966.60 L1599.57,988.92 L1599.75,988.92 L1600.00,978.64 L1600.35,984.32 L1600.67,983.17 L1600.75,983.17 L1601.00,939.37 L1601.35,981.88 L1602.17,996.59 L1602.75,996.59 L1603.00,989.86 L1603.35,984.07 L1604.17,990.31 L1604.75,990.31 L1605.00,956.20 L1605.35,986.23 L1606.17,996.59 L1606.75,996.59 L1607.00,989.86 L1607.35,992.82 L1608.17,996.59 L1608.75,996.59 L1609.00,989.86 L1609.35,988.45 L1610.17,999.04 L1610.75,999.04 L1611.00,889.44 L1611.35,974.68 L1611.92,990.07 L1612.25,990.07 L1612.50,967.42 L1612.85,979.55 L1613.80,992.55 L1614.83,993.32 L1615.85,994.05 L1616.88,994.75 L1617.08,992.33 L1617.38,992.82 L1617.90,995.42 L1618.92,996.05 L1619.95,996.66 L1620.15,994.86 L1620.45,995.22 L1620.97,997.24 L1622.00,997.79 L1623.02,998.32 L1623.22,997.30 L1623.52,997.50 L1624.05,998.82 L1625.08,999.30 L1626.10,999.76 L1627.12,1000.20 L1628.15,1000.61 L1629.17,1001.01 L1630.20,1001.39 L1631.22,1001.75 L1632.25,1002.10 L1633.27,1002.43 L1634.30,1002.75 L1635.32,1003.05 L1636.35,1003.33 L1637.38,1003.61 L1638.40,1003.87 L1639.42,1004.12 L1640.45,1004.35 L1641.47,1004.58 L1642.50,1004.80 L1643.52,1005.00 L1644.55,1005.20 L1645.57,1005.39 L1646.60,1005.57 L1646.60,1005.57 L1647.30,1006.84 L1647.75,1006.84 L1648.00,801.36 L1648.35,923.32 L1648.67,976.99 L1648.75,976.99 L1649.00,956.20 L1649.35,987.96 L1649.67,976.88 L1649.75,976.88 L1650.00,928.15 L1650.35,983.33 L1650.67,993.97 L1650.75,993.97 L1651.00,961.81 L1651.35,977.50 L1651.67,987.99 L1651.75,987.99 L1652.00,905.71 L1652.35,977.24 L1652.67,986.71 L1652.75,986.71 L1653.00,944.98 L1653.35,972.08 L1654.17,988.26 L1654.75,988.26 L1655.00,855.22 L1655.35,962.32 L1655.67,977.60 L1655.75,977.60 L1656.00,928.15 L1656.35,967.27 L1657.12,971.98 L1657.65,971.98 L1657.90,825.49 L1658.25,967.61 L1658.62,972.42 L1658.75,972.42 L1659.00,900.10 L1659.35,965.48 L1659.67,966.29 L1659.75,966.29 L1660.00,844.00 L1660.35,936.85 L1660.67,971.24 L1660.75,971.24 L1661.00,922.54 L1661.35,963.98 L1662.17,956.55 L1662.75,956.55 L1663.00,888.88 L1663.35,962.27 L1663.67,953.45 L1663.75,953.45 L1664.00,922.54 L1664.35,959.47 L1664.92,977.01 L1665.25,977.01 L1665.50,750.31 L1665.85,944.97 L1666.42,955.25 L1666.75,955.25 L1667.00,872.05 L1667.35,950.75 L1667.67,961.25 L1667.75,961.25 L1668.00,939.37 L1668.35,951.84 L1669.03,952.76 L1669.45,952.76 L1669.70,877.66 L1670.05,954.51 L1670.80,962.93 L1671.82,965.06 L1672.84,967.10 L1673.04,959.90 L1673.34,961.34 L1673.86,969.06 L1674.88,970.95 L1675.91,972.76 L1676.93,974.51 L1677.95,976.18 L1678.97,977.79 L1679.99,979.34 L1681.01,980.83 L1681.21,977.79 L1681.51,978.40 L1682.03,982.26 L1683.05,983.64 L1684.07,984.96 L1685.09,986.23 L1686.12,987.46 L1686.32,984.79 L1686.62,985.32 L1687.14,988.63 L1688.16,989.76 L1689.18,990.85 L1690.20,991.89 L1691.22,992.89 L1691.42,990.85 L1691.72,991.26 L1692.24,993.86 L1693.26,994.78 L1694.28,995.68 L1695.31,996.53 L1696.33,997.36 L1696.53,994.68 L1696.83,995.22 L1697.35,998.15 L1698.37,998.91 L1699.39,999.64 L1700.41,1000.34 L1701.43,1001.02 L1702.45,1001.67 L1703.47,1002.30 L1704.49,1002.90 L1705.52,1003.47 L1706.54,1004.03 L1707.56,1004.56 L1708.58,1005.07 L1709.60,1005.57 L1713.60,1005.57 L1714.30,1008.03 L1714.75,1008.03 L1715.00,967.42 L1715.35,1000.07 L1715.67,1003.11 L1715.75,1003.11 L1716.00,989.86 L1716.35,1001.56 L1716.67,1003.42 L1716.75,1003.42 L1717.00,869.24 L1717.35,959.85 L1717.67,993.60 L1717.75,993.60 L1718.00,956.20 L1718.35,990.82 L1718.67,992.27 L1718.75,992.27 L1719.00,928.15 L1719.35,978.00 L1719.67,981.27 L1719.75,981.27 L1720.00,956.20 L1720.35,988.28 L1720.67,994.74 L1720.75,994.74 L1721.00,911.32 L1721.35,987.96 L1721.92,978.15 L1722.25,978.15 L1722.50,933.76 L1722.85,976.91 L1723.42,984.06 L1723.75,984.06 L1724.00,815.39 L1724.35,943.74 L1724.67,983.35 L1724.75,983.35 L1725.00,900.10 L1725.35,975.21 L1725.67,982.11 L1725.75,982.11 L1726.00,888.88 L1726.35,969.36 L1726.92,953.59 L1727.25,953.59 L1727.50,905.71 L1727.85,969.63 L1728.57,964.01 L1729.05,964.01 L1729.30,735.17 L1729.65,899.98 L1729.75,958.08 L1730.00,866.44 L1730.35,958.47 L1730.67,976.45 L1730.75,976.45 L1731.00,827.17 L1731.35,942.88 L1731.67,941.61 L1731.75,941.61 L1732.00,911.32 L1732.35,946.71 L1732.67,953.25 L1732.75,953.25 L1733.00,860.83 L1733.35,969.47 L1733.67,964.21 L1733.75,964.21 L1734.00,922.54 L1734.35,957.13 L1734.67,967.86 L1734.75,967.86 L1735.00,900.10 L1735.35,963.21 L1735.67,957.32 L1735.75,957.32 L1736.00,933.76 L1736.35,965.32 L1736.78,960.52 L1736.95,960.52 L1737.20,875.98 L1737.55,954.56 L1737.78,972.26 L1737.75,972.26 L1738.00,950.59 L1738.35,971.41 L1738.67,965.95 L1738.75,965.95 L1739.00,939.37 L1739.35,963.47 L1739.67,976.96 L1739.75,976.96 L1740.00,961.81 L1740.35,972.03 L1741.00,975.27 L1742.02,977.12 L1743.05,978.87 L1744.07,980.54 L1745.09,982.14 L1746.11,983.65 L1746.31,981.09 L1746.61,981.61 L1747.14,985.10 L1748.16,986.48 L1749.18,987.79 L1750.20,989.04 L1751.23,990.23 L1752.25,991.37 L1753.27,992.45 L1754.29,993.48 L1755.32,994.46 L1756.34,995.40 L1757.36,996.29 L1758.38,997.14 L1759.41,997.95 L1760.43,998.72 L1761.45,999.45 L1762.47,1000.15 L1763.50,1000.82 L1764.52,1001.46 L1765.54,1002.06 L1766.56,1002.64 L1767.59,1003.19 L1768.61,1003.71 L1769.63,1004.21 L1770.65,1004.68 L1771.68,1005.14 L1772.70,1005.57 L1780.50,1005.57 L1781.15,1005.36 L1781.55,1005.36 L1781.80,750.87 L1782.15,952.00 L1782.57,972.59 L1782.75,972.59 L1783.00,823.24 L1783.35,932.09 L1783.67,978.32 L1783.75,978.32 L1784.00,900.10 L1784.35,966.24 L1784.67,980.06 L1784.75,980.06 L1785.00,922.54 L1785.35,969.15 L1785.67,986.59 L1785.75,986.59 L1786.00,944.98 L1786.35,981.33 L1787.00,967.38 L1788.01,968.77 L1789.02,970.13 L1790.03,971.45 L1791.05,972.73 L1792.06,973.98 L1793.07,975.19 L1794.08,976.36 L1795.09,977.51 L1796.10,978.62 L1797.12,979.69 L1798.13,980.74 L1798.33,978.09 L1798.63,978.62 L1799.14,981.76 L1800.15,982.75 L1801.16,983.71 L1802.17,984.64 L1803.18,985.55 L1804.20,986.43 L1805.21,987.29 L1806.22,988.12 L1807.23,988.93 L1808.24,989.71 L1809.25,990.47 L1809.45,987.41 L1809.75,988.02 L1810.27,991.22 L1811.28,991.94 L1812.29,992.64 L1813.30,993.31 L1814.31,993.98 L1815.32,994.62 L1816.33,995.24 L1817.35,995.85 L1818.36,996.43 L1819.37,997.01 L1820.38,997.56 L1821.39,998.10 L1822.40,998.62 L1823.42,999.13 L1824.43,999.63 L1825.44,1000.11 L1826.45,1000.58 L1827.46,1001.03 L1828.47,1001.47 L1829.48,1001.90 L1830.50,1002.32 L1831.51,1002.72 L1832.52,1003.11 L1833.53,1003.50 L1834.54,1003.87 L1835.55,1004.23 L1836.57,1004.58 L1837.58,1004.92 L1838.59,1005.25 L1839.60,1005.57 L1847.50,1005.57 L1847.90,1007.04 L1848.05,1007.04 L1848.30,950.59 L1848.65,985.99 L1848.75,1000.21 L1849.00,799.68 L1849.35,946.80 L1849.67,971.17 L1849.75,971.17 L1850.00,713.85 L1850.35,948.53 L1850.67,949.60 L1850.75,949.60 L1851.00,838.39 L1851.35,940.60 L1851.67,951.64 L1851.75,951.64 L1852.00,900.10 L1852.35,950.32 L1852.67,956.05 L1852.75,956.05 L1853.00,877.66 L1853.35,972.39 L1853.67,962.61 L1853.75,962.61 L1854.00,911.32 L1854.35,962.62 L1854.67,981.15 L1854.75,981.15 L1855.00,894.49 L1855.35,958.07 L1855.67,974.79 L1855.75,974.79 L1856.00,922.54 L1856.35,972.32 L1856.67,977.62 L1856.75,977.62 L1857.00,855.22 L1857.35,945.10 L1857.67,953.39 L1857.75,953.39 L1858.00,928.15 L1858.35,962.75 L1858.67,971.19 L1858.75,971.19 L1859.00,900.10 L1859.35,959.27 L1859.67,960.19 L1859.75,960.19 L1860.00,859.71 L1860.35,947.32 L1860.67,979.82 L1860.75,979.82 L1861.00,928.15 L1861.35,959.85 L1862.00,972.81 L1863.02,974.36 L1864.03,975.85 L1865.05,977.29 L1866.06,978.68 L1867.08,980.02 L1867.28,977.13 L1867.58,977.71 L1868.09,981.30 L1869.11,982.54 L1870.12,983.74 L1870.32,978.95 L1870.62,979.91 L1871.13,984.89 L1872.15,985.99 L1873.16,987.06 L1874.18,988.09 L1875.19,989.08 L1875.39,987.60 L1875.69,987.89 L1876.21,990.03 L1877.22,990.95 L1878.24,991.83 L1879.25,992.69 L1880.27,993.51 L1881.28,994.30 L1882.30,995.06 L1883.32,995.79 L1884.33,996.50 L1885.35,997.18 L1886.36,997.83 L1887.38,998.46 L1888.39,999.07 L1889.40,999.66 L1890.42,1000.22 L1891.43,1000.76 L1892.45,1001.29 L1893.46,1001.79 L1894.48,1002.28 L1895.49,1002.74 L1896.51,1003.19 L1897.52,1003.63 L1898.54,1004.05 L1899.55,1004.45 L1900.57,1004.84 L1901.58,1005.21 L1902.60,1005.57 L1904.50,1005.57 L1904.75,1008.18 L1904.75,1008.18 L1905.00,947.78 L1905.35,983.34 L1905.92,1003.02 L1906.25,1003.02 L1906.50,984.25 L1906.85,998.83 L1907.42,996.54 L1907.75,996.54 L1908.00,984.25 L1908.35,1003.11 L1909.17,998.02 L1909.75,998.02 L1910.00,989.86 L1910.35,1001.18 L1911.17,996.64 L1911.75,996.64 L1912.00,961.81 L1912.35,994.52 L1913.42,994.59 L1914.25,994.59 L1914.50,924.22 L1914.85,984.69 L1915.42,998.06 L1915.75,998.06 L1916.00,967.42 L1916.35,994.01 L1916.67,987.57 L1916.75,987.57 L1917.00,939.37 L1917.35,992.06 L1917.92,993.37 L1918.25,993.37 L1918.50,956.20 L1918.85,985.27 L1919.28,990.78 L1919.45,990.78 L1919.70,831.66 L1920.05,936.23 L1920.53,973.24 L1920.75,973.24 L1921.00,900.10 L1921.35,978.96 L1921.67,973.03 L1921.75,973.03 L1922.00,956.20 L1922.35,973.43 L1922.67,976.96 L1922.75,976.96 L1923.00,961.81 L1923.35,988.15 L1923.70,990.08 L1924.72,990.90 L1925.74,991.68 L1926.76,992.43 L1927.78,993.14 L1928.80,993.83 L1929.00,991.40 L1929.30,991.88 L1929.82,994.49 L1930.84,995.13 L1931.86,995.73 L1932.88,996.32 L1933.08,994.81 L1933.38,995.11 L1933.89,996.88 L1934.91,997.41 L1935.93,997.93 L1936.95,998.42 L1937.97,998.89 L1938.99,999.35 L1940.01,999.78 L1941.03,1000.20 L1941.23,998.80 L1941.53,999.08 L1942.05,1000.60 L1943.07,1000.98 L1944.09,1001.35 L1945.11,1001.71 L1946.13,1002.05 L1947.15,1002.37 L1948.17,1002.68 L1949.19,1002.98 L1950.21,1003.27 L1951.23,1003.54 L1952.24,1003.81 L1953.26,1004.06 L1954.28,1004.30 L1955.30,1004.54 L1956.32,1004.76 L1957.34,1004.98 L1958.36,1005.18 L1959.38,1005.38 L1960.40,1005.57 L1961.00,1005.57 L1961.50,1006.05 L1961.75,1006.05 L1962.00,989.86 L1962.35,1002.73 L1963.17,1004.30 L1963.75,1004.30 L1964.00,967.42 L1964.35,995.65 L1965.17,1000.24 L1965.75,1000.24 L1966.00,978.64 L1966.35,994.71 L1967.17,995.84 L1967.75,995.84 L1968.00,900.10 L1968.35,972.80 L1968.67,994.57 L1968.75,994.57 L1969.00,950.59 L1969.35,988.03 L1969.67,983.32 L1969.75,983.32 L1970.00,939.37 L1970.35,981.38 L1971.03,986.90 L1971.45,986.90 L1971.70,789.02 L1972.05,935.26 L1972.53,970.44 L1972.75,970.44 L1973.00,928.15 L1973.35,982.72 L1973.67,966.11 L1973.75,966.11 L1974.00,928.15 L1974.35,971.65 L1974.67,984.00 L1974.75,984.00 L1975.00,961.81 L1975.35,984.99 L1976.17,979.07 L1976.75,979.07 L1977.00,784.53 L1977.35,941.60 L1977.67,973.48 L1977.75,973.48 L1978.00,872.05 L1978.35,952.77 L1978.67,947.38 L1978.75,947.38 L1979.00,900.10 L1979.35,961.52 L1979.67,957.32 L1979.75,957.32 L1980.00,933.76 L1980.35,975.02 L1981.57,975.89 L1982.55,975.89 L1982.80,782.29 L1983.15,948.22 L1983.57,952.52 L1983.75,952.52 L1984.00,888.88 L1984.35,957.64 L1984.67,956.38 L1984.75,956.38 L1985.00,900.10 L1985.35,966.84 L1985.67,975.57 L1985.75,975.57 L1986.00,939.37 L1986.35,973.72 L1986.67,961.97 L1986.75,961.97 L1987.00,866.44 L1987.35,954.44 L1987.92,981.60 L1988.25,981.60 L1988.50,922.54 L1988.85,969.76 L1989.72,978.46 L1990.35,978.46 L1990.60,732.36 L1990.95,933.28 L1991.47,953.39 L1991.75,953.39 L1992.00,928.15 L1992.35,950.21 L1992.67,974.69 L1992.75,974.69 L1993.00,944.98 L1993.35,967.08 L1994.60,970.34 L1995.60,972.20 L1996.61,973.98 L1996.81,970.58 L1997.11,971.26 L1997.61,975.69 L1998.61,977.32 L1999.61,978.89 L2000.62,980.38 L2001.62,981.81 L2002.62,983.18 L2002.82,981.31 L2003.12,981.69 L2003.63,984.49 L2004.63,985.74 L2005.63,986.94 L2006.64,988.09 L2007.64,989.19 L2008.64,990.24 L2009.64,991.24 L2010.65,992.20 L2011.65,993.12 L2012.65,994.00 L2013.66,994.84 L2014.66,995.65 L2015.66,996.42 L2016.66,997.16 L2016.86,995.52 L2017.16,995.85 L2017.67,997.87 L2018.67,998.54 L2019.67,999.19 L2020.68,999.81 L2021.68,1000.40 L2022.68,1000.96 L2023.69,1001.51 L2024.69,1002.03 L2025.69,1002.52 L2026.69,1003.00 L2027.70,1003.45 L2028.70,1003.88 L2028.70,1003.88 L2029.10,1007.77 L2029.25,1007.77 L2029.50,984.25 L2029.85,1001.82 L2030.17,1000.52 L2030.25,1000.52 L2030.50,995.47 L2030.85,1002.00 L2030.75,1003.09 L2031.00,978.64 L2031.35,998.47 L2032.03,1001.58 L2032.45,1001.58 L2032.70,874.29 L2033.05,977.27 L2033.28,992.66 L2033.25,992.66 L2033.50,984.25 L2033.85,994.45 L2034.20,985.15 L2034.30,984.54 L2034.40,984.25" fill="none" stroke="#ec1c24" stroke-width="2.2" stroke-linejoin="miter" stroke-miterlimit="2"/>
<path d="M1447.00,1005.57 L1447.00,984.25 M1774.80,1005.57 L1774.80,979.20 M1840.00,1005.57 L1840.00,995.47 M1898.00,1003.82 L1898.00,989.86 M1793.00,975.11 L1793.00,973.03" fill="none" stroke="#ec1c24" stroke-width="2.2"/>
</svg>
</body></html>
